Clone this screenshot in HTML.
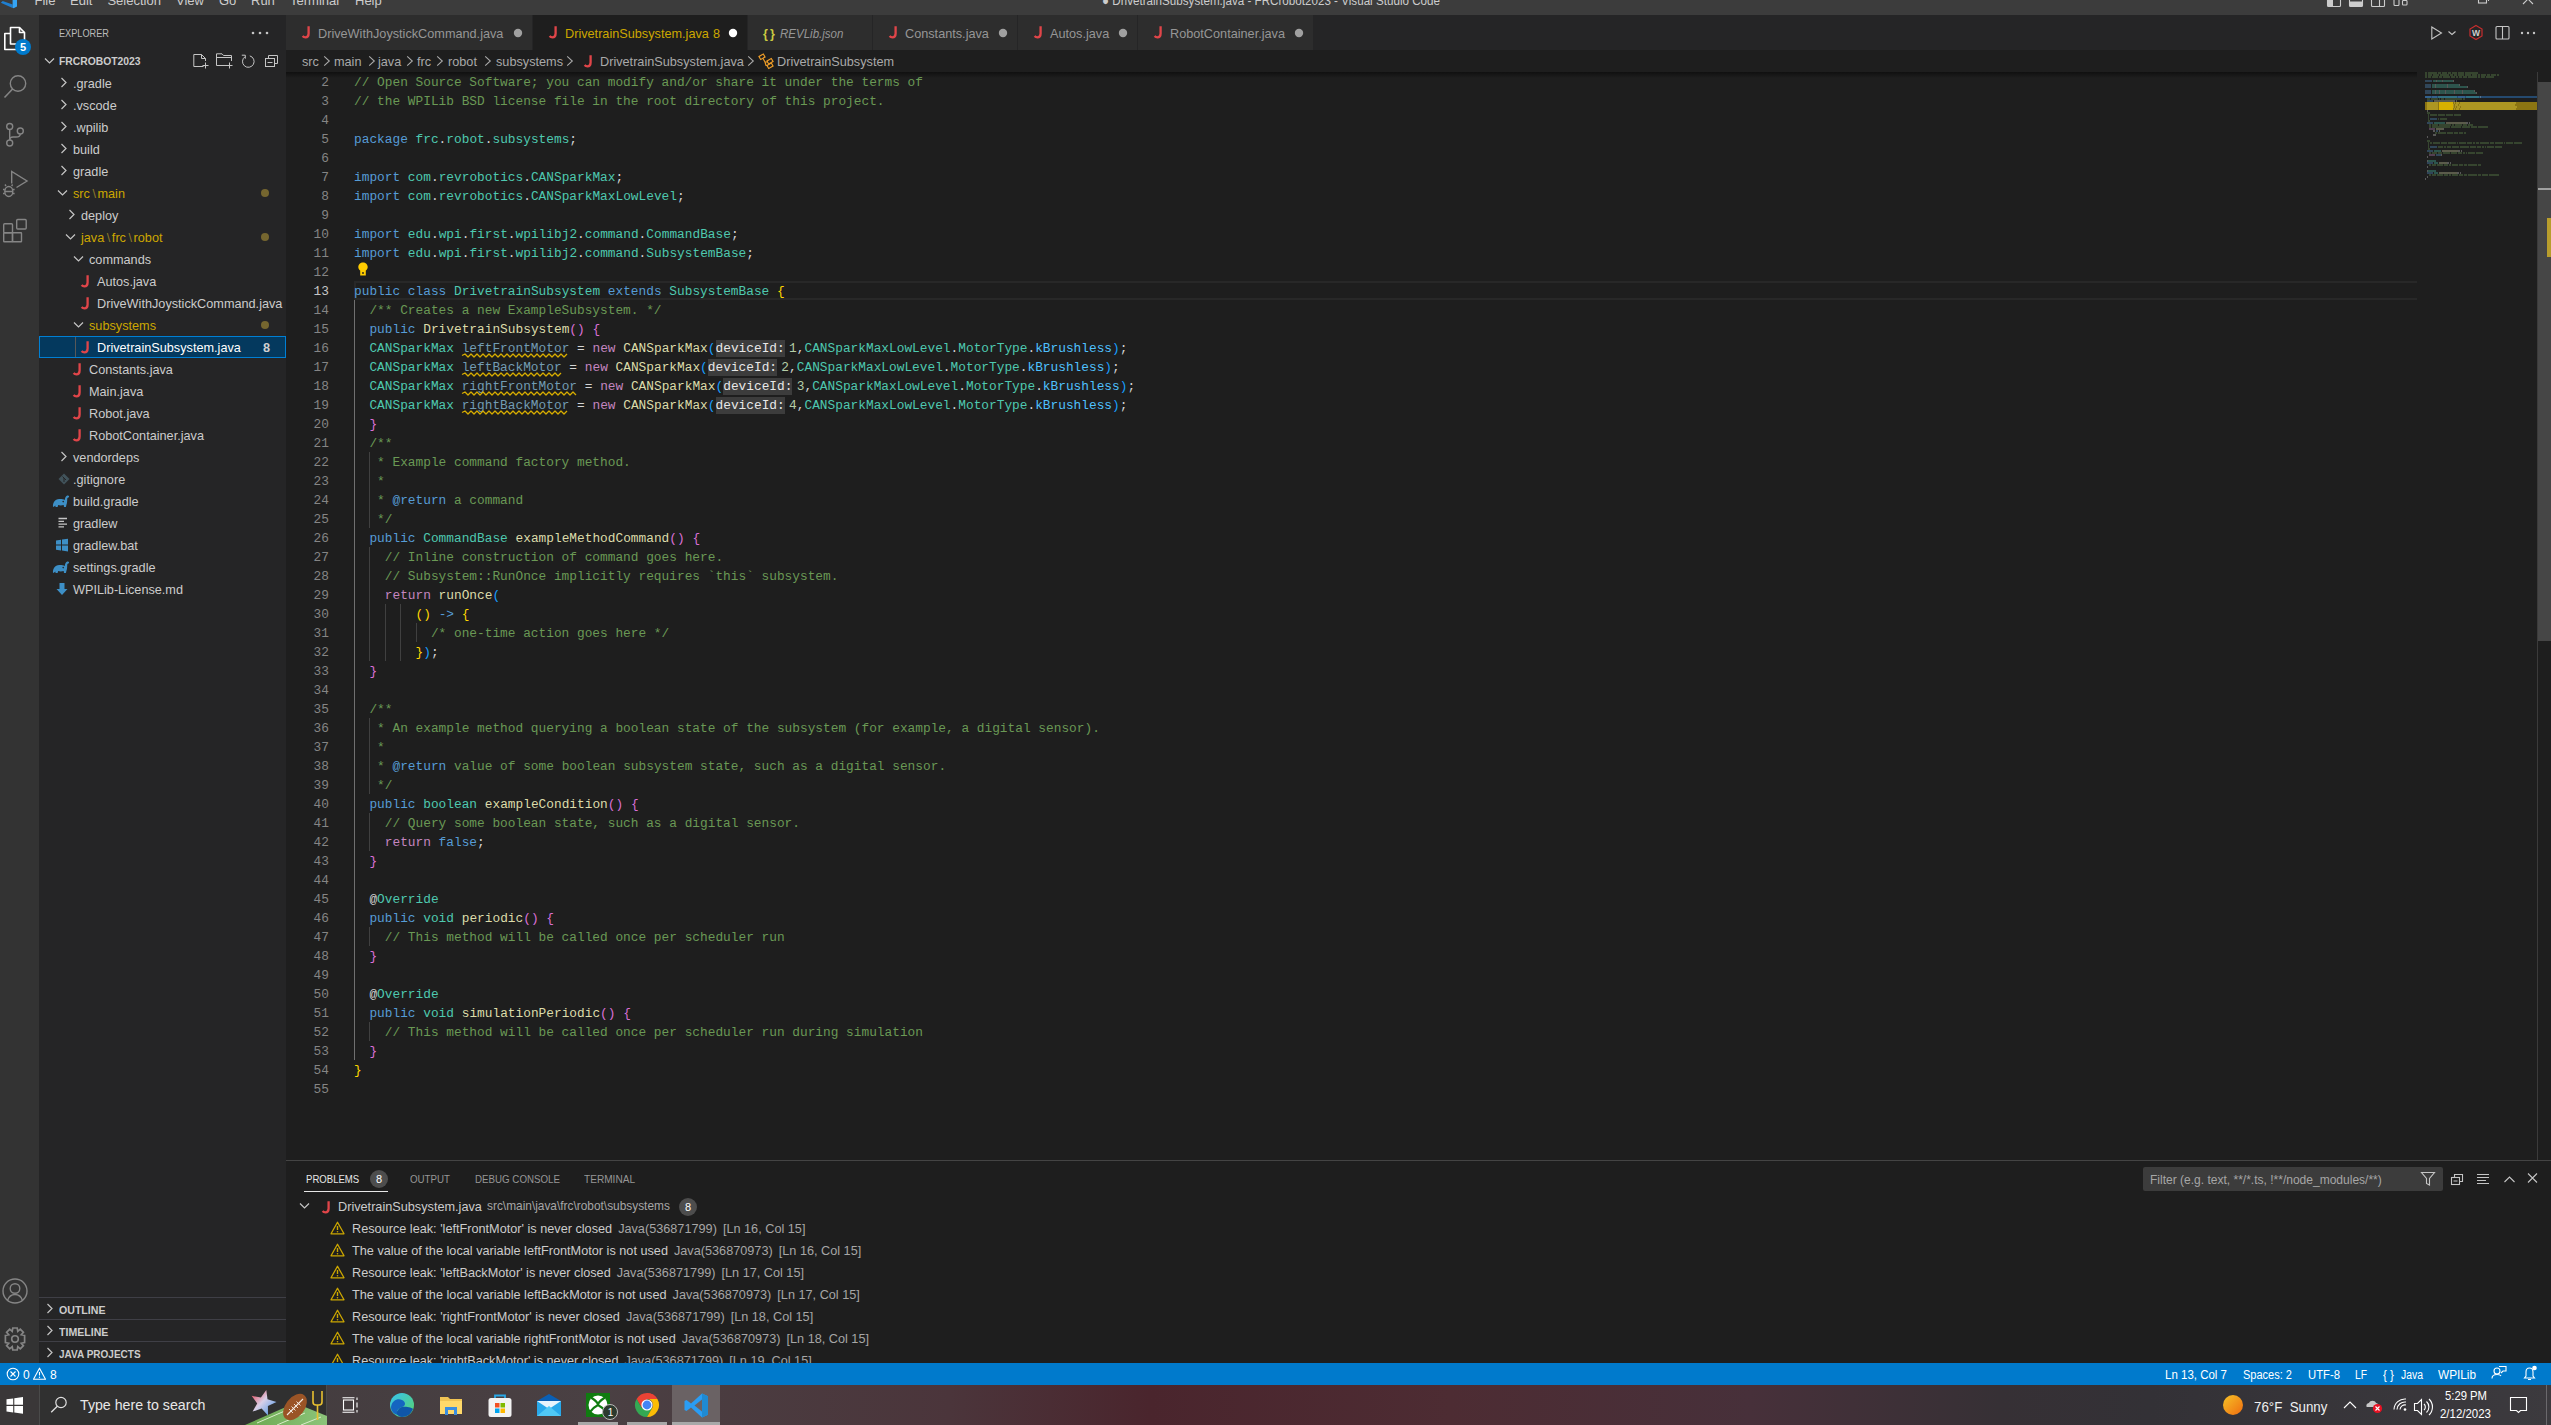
<!DOCTYPE html>
<html><head><meta charset="utf-8"><style>
html,body{margin:0;padding:0;}
body{width:2551px;height:1425px;overflow:hidden;position:relative;background:#1e1e1e;}
svg{position:absolute;overflow:visible}
</style></head><body>
<div style="position:absolute;left:0px;top:0px;width:2551px;height:15px;background:#3c3c3c;"></div>
<div style="position:absolute;left:0px;top:15px;width:39px;height:1348px;background:#333333;"></div>
<div style="position:absolute;left:39px;top:15px;width:247px;height:1348px;background:#252526;"></div>
<div style="position:absolute;left:286px;top:15px;width:2265px;height:35px;background:#252526;"></div>
<div style="position:absolute;left:286px;top:50px;width:2265px;height:22px;background:#1e1e1e;"></div>
<div style="position:absolute;left:286px;top:72px;width:2265px;height:1088px;background:#1e1e1e;"></div>
<div style="position:absolute;left:286px;top:1160px;width:2265px;height:203px;background:#1e1e1e;"></div>
<div style="position:absolute;left:286px;top:1160px;width:2265px;height:1px;background:#444444;"></div>
<div style="position:absolute;left:0px;top:1363px;width:2551px;height:22px;background:#007acc;"></div>
<div style="position:absolute;left:0px;top:1385px;width:2551px;height:40px;background:#3b3537;"></div>
<div style="position:absolute;left:34.5px;top:-6.00px;font:400 13px 'Liberation Sans', sans-serif;line-height:13px;color:#cccccc;white-space:pre;">File</div>
<div style="position:absolute;left:70px;top:-6.00px;font:400 13px 'Liberation Sans', sans-serif;line-height:13px;color:#cccccc;white-space:pre;">Edit</div>
<div style="position:absolute;left:107.4px;top:-6.00px;font:400 13px 'Liberation Sans', sans-serif;line-height:13px;color:#cccccc;white-space:pre;">Selection</div>
<div style="position:absolute;left:176px;top:-6.00px;font:400 13px 'Liberation Sans', sans-serif;line-height:13px;color:#cccccc;white-space:pre;">View</div>
<div style="position:absolute;left:219px;top:-6.00px;font:400 13px 'Liberation Sans', sans-serif;line-height:13px;color:#cccccc;white-space:pre;">Go</div>
<div style="position:absolute;left:251px;top:-6.00px;font:400 13px 'Liberation Sans', sans-serif;line-height:13px;color:#cccccc;white-space:pre;">Run</div>
<div style="position:absolute;left:290px;top:-6.00px;font:400 13px 'Liberation Sans', sans-serif;line-height:13px;color:#cccccc;white-space:pre;">Terminal</div>
<div style="position:absolute;left:355px;top:-6.00px;font:400 13px 'Liberation Sans', sans-serif;line-height:13px;color:#cccccc;white-space:pre;">Help</div>
<div style="position:absolute;left:1102px;top:-6.00px;font:400 13px 'Liberation Sans', sans-serif;line-height:13px;color:#cccccc;white-space:pre;transform:scaleX(0.8952);transform-origin:0 0;">● DrivetrainSubsystem.java - FRCrobot2023 - Visual Studio Code</div>
<svg style="left:0;top:0" width="20" height="15" viewBox="0 0 20 15"><path d="M0.8 2.7 L2.7 1.0 L12.6 4.4 V8.1 Z" fill="#1f7fd0"/><path d="M12.6 -2 H17 V6.4 L13.6 8.3 L12.6 7.8 Z" fill="#35a4f4"/></svg>
<svg style="left:0;top:0" width="40" height="1363" viewBox="0 0 40 1363">
<g fill="none" stroke="#ffffff" stroke-width="1.6" stroke-linejoin="round">
 <path d="M10.5 27.5 H19.5 L24.5 32.5 V44 H10.5 Z"/>
 <path d="M19.5 27.5 V32.5 H24.5"/>
 <path d="M10.5 33.5 H4.8 V49.5 H16"/>
</g>
<circle cx="23" cy="47" r="8" fill="#007acc"/>
<text x="23" y="51" font-family="Liberation Sans" font-size="11" font-weight="700" fill="#fff" text-anchor="middle">5</text>
<g fill="none" stroke="#858585" stroke-width="1.4">
 <circle cx="18" cy="83.5" r="7.7"/>
 <path d="M12.6 89 L4.5 97.5" stroke-width="1.6"/>
 <circle cx="9.7" cy="126.5" r="3"/>
 <circle cx="20.3" cy="131" r="3"/>
 <circle cx="9.7" cy="143" r="3"/>
 <path d="M9.7 129.5 V140"/>
 <path d="M20.3 134 C20.3 136.5 19 137 16 137 H13 C11 137 9.7 138 9.7 140"/>
 <path d="M11.7 183.5 V171.5 L27 181 L16.5 187.5"/>
 <ellipse cx="8.8" cy="191.5" rx="4" ry="5"/>
 <path d="M4.8 189.5 H3 M4.8 193.5 H3 M12.8 189.5 H14.6 M12.8 193.5 H14.6 M6 186 L5 184.5 M11.6 186 L12.6 184.5 M4.8 191.5 H12.8"/>
 <rect x="3.7" y="223.7" width="8.8" height="9" rx="1"/>
 <rect x="3.7" y="232.7" width="8.8" height="9" rx="0.5"/>
 <rect x="12.5" y="232.7" width="9" height="9" rx="0.5"/>
 <rect x="16.7" y="219.5" width="9.5" height="9.5" rx="1"/>
 <circle cx="15" cy="1291" r="12"/>
 <circle cx="15" cy="1288.5" r="4.8"/>
 <path d="M7.5 1300.5 C9 1296 12 1294.5 15 1294.5 C18 1294.5 21 1296 22.5 1300.5"/>
 <circle cx="15" cy="1339" r="3.3" stroke-width="1.6"/>
</g>
<path fill="none" stroke="#858585" stroke-width="1.7" stroke-linejoin="miter" d="M12.8 1328 H17.2 L17.8 1331.3 L20.3 1329.2 L23.4 1332.3 L21.3 1334.8 L24.6 1335.4 V1342.6 L21.3 1343.2 L23.4 1345.7 L20.3 1348.8 L17.8 1346.7 L17.2 1350 H12.8 L12.2 1346.7 L9.7 1348.8 L6.6 1345.7 L8.7 1343.2 L5.4 1342.6 V1335.4 L8.7 1334.8 L6.6 1332.3 L9.7 1329.2 L12.2 1331.3 Z"/>
</svg>
<div style="position:absolute;left:59px;top:27.69px;font:400 11px 'Liberation Sans', sans-serif;line-height:11px;color:#bbbbbb;white-space:pre;transform:scaleX(0.8346);transform-origin:0 0;">EXPLORER</div>
<svg style="left:250px;top:30px" width="22" height="6"><circle cx="3" cy="3" r="1.3" fill="#c5c5c5"/><circle cx="10" cy="3" r="1.3" fill="#c5c5c5"/><circle cx="17" cy="3" r="1.3" fill="#c5c5c5"/></svg>
<div style="position:absolute;left:59px;top:55.69px;font:700 11px 'Liberation Sans', sans-serif;line-height:11px;color:#cccccc;white-space:pre;transform:scaleX(0.9390);transform-origin:0 0;">FRCROBOT2023</div>
<svg style="left:44px;top:57px" width="12" height="8"><path d="M1 1.5 L5.5 6 L10 1.5" fill="none" stroke="#c5c5c5" stroke-width="1.2"/></svg>
<svg style="left:190px;top:50px" width="95" height="22" viewBox="190 50 95 22"><g fill="none" stroke="#c5c5c5" stroke-width="1">
<path d="M203.5 66.5 H193.8 V54.5 H201.5 L205.5 58.5 V61"/><path d="M201.5 54.5 V58.5 H205.5"/><path d="M205.5 62.5 V68.5 M202.5 65.5 H208.5"/>
<path d="M227.5 65.5 H216.5 V53.8 H222 L223.5 55.5 H231.5 V61"/><path d="M216.5 57.5 H231.5"/><path d="M229.5 62.5 V68.5 M226.5 65.5 H232.5"/>
<path d="M244.97 56.75 A5.8 5.8 0 1 0 249.8 55.9"/><path d="M241.8 55.2 H245.3 V58.7"/>
<rect x="265.5" y="58.5" width="9" height="8"/><path d="M268.5 58.5 V55.5 H277.5 V63.5 H274.5 M267.5 62.5 H272.5"/>
</g></svg>
<svg style="left:60px;top:77px" width="8" height="12"><path d="M1.5 1 L6 5.5 L1.5 10" fill="none" stroke="#c5c5c5" stroke-width="1.2"/></svg>
<div style="position:absolute;left:73px;top:78.25px;font:400 12.7px 'Liberation Sans', sans-serif;line-height:12.7px;color:#cccccc;white-space:pre;">.gradle</div>
<svg style="left:60px;top:99px" width="8" height="12"><path d="M1.5 1 L6 5.5 L1.5 10" fill="none" stroke="#c5c5c5" stroke-width="1.2"/></svg>
<div style="position:absolute;left:73px;top:100.25px;font:400 12.7px 'Liberation Sans', sans-serif;line-height:12.7px;color:#cccccc;white-space:pre;">.vscode</div>
<svg style="left:60px;top:121px" width="8" height="12"><path d="M1.5 1 L6 5.5 L1.5 10" fill="none" stroke="#c5c5c5" stroke-width="1.2"/></svg>
<div style="position:absolute;left:73px;top:122.25px;font:400 12.7px 'Liberation Sans', sans-serif;line-height:12.7px;color:#cccccc;white-space:pre;">.wpilib</div>
<svg style="left:60px;top:143px" width="8" height="12"><path d="M1.5 1 L6 5.5 L1.5 10" fill="none" stroke="#c5c5c5" stroke-width="1.2"/></svg>
<div style="position:absolute;left:73px;top:144.25px;font:400 12.7px 'Liberation Sans', sans-serif;line-height:12.7px;color:#cccccc;white-space:pre;">build</div>
<svg style="left:60px;top:165px" width="8" height="12"><path d="M1.5 1 L6 5.5 L1.5 10" fill="none" stroke="#c5c5c5" stroke-width="1.2"/></svg>
<div style="position:absolute;left:73px;top:166.25px;font:400 12.7px 'Liberation Sans', sans-serif;line-height:12.7px;color:#cccccc;white-space:pre;">gradle</div>
<svg style="left:57px;top:189px" width="12" height="8"><path d="M1 1.5 L5.5 6 L10 1.5" fill="none" stroke="#c5c5c5" stroke-width="1.2"/></svg>
<div style="position:absolute;left:73px;top:188.25px;font:400 12.7px 'Liberation Sans', sans-serif;line-height:12.7px;color:#cca700;white-space:pre;">src<span style="color:#8b7a2c;letter-spacing:-1px"> \ </span>main</div>
<svg style="left:260px;top:189px" width="10" height="10"><circle cx="5" cy="4" r="4" fill="#75662f"/></svg>
<svg style="left:68px;top:209px" width="8" height="12"><path d="M1.5 1 L6 5.5 L1.5 10" fill="none" stroke="#c5c5c5" stroke-width="1.2"/></svg>
<div style="position:absolute;left:81px;top:210.25px;font:400 12.7px 'Liberation Sans', sans-serif;line-height:12.7px;color:#cccccc;white-space:pre;">deploy</div>
<svg style="left:65px;top:233px" width="12" height="8"><path d="M1 1.5 L5.5 6 L10 1.5" fill="none" stroke="#c5c5c5" stroke-width="1.2"/></svg>
<div style="position:absolute;left:81px;top:232.25px;font:400 12.7px 'Liberation Sans', sans-serif;line-height:12.7px;color:#cca700;white-space:pre;">java<span style="color:#8b7a2c;letter-spacing:-1px"> \ </span>frc<span style="color:#8b7a2c;letter-spacing:-1px"> \ </span>robot</div>
<svg style="left:260px;top:233px" width="10" height="10"><circle cx="5" cy="4" r="4" fill="#75662f"/></svg>
<svg style="left:73px;top:255px" width="12" height="8"><path d="M1 1.5 L5.5 6 L10 1.5" fill="none" stroke="#c5c5c5" stroke-width="1.2"/></svg>
<div style="position:absolute;left:89px;top:254.25px;font:400 12.7px 'Liberation Sans', sans-serif;line-height:12.7px;color:#cccccc;white-space:pre;">commands</div>
<svg style="left:81px;top:275px" width="10" height="13" viewBox="0 0 10 13"><path d="M6.6 0.2 V7.6 C6.6 10.4 5.2 11.4 3.4 11.4 C2.2 11.4 1.2 10.8 0.6 10.1" fill="none" stroke="#e04549" stroke-width="2.3"/></svg>
<div style="position:absolute;left:97px;top:276.25px;font:400 12.7px 'Liberation Sans', sans-serif;line-height:12.7px;color:#cccccc;white-space:pre;">Autos.java</div>
<svg style="left:81px;top:297px" width="10" height="13" viewBox="0 0 10 13"><path d="M6.6 0.2 V7.6 C6.6 10.4 5.2 11.4 3.4 11.4 C2.2 11.4 1.2 10.8 0.6 10.1" fill="none" stroke="#e04549" stroke-width="2.3"/></svg>
<div style="position:absolute;left:97px;top:298.25px;font:400 12.7px 'Liberation Sans', sans-serif;line-height:12.7px;color:#cccccc;white-space:pre;">DriveWithJoystickCommand.java</div>
<svg style="left:73px;top:321px" width="12" height="8"><path d="M1 1.5 L5.5 6 L10 1.5" fill="none" stroke="#c5c5c5" stroke-width="1.2"/></svg>
<div style="position:absolute;left:89px;top:320.25px;font:400 12.7px 'Liberation Sans', sans-serif;line-height:12.7px;color:#cca700;white-space:pre;">subsystems</div>
<svg style="left:260px;top:321px" width="10" height="10"><circle cx="5" cy="4" r="4" fill="#75662f"/></svg>
<div style="position:absolute;left:39px;top:336px;width:247px;height:22px;background:#04395e;box-sizing:border-box;border:1px solid #007fd4;"></div>
<div style="position:absolute;left:75px;top:337px;width:1px;height:20px;background:#585858;"></div>
<svg style="left:81px;top:341px" width="10" height="13" viewBox="0 0 10 13"><path d="M6.6 0.2 V7.6 C6.6 10.4 5.2 11.4 3.4 11.4 C2.2 11.4 1.2 10.8 0.6 10.1" fill="none" stroke="#e04549" stroke-width="2.3"/></svg>
<div style="position:absolute;left:97px;top:342.25px;font:400 12.7px 'Liberation Sans', sans-serif;line-height:12.7px;color:#ffffff;white-space:pre;">DrivetrainSubsystem.java</div>
<div style="position:absolute;left:263px;top:342.25px;font:700 12.7px 'Liberation Sans', sans-serif;line-height:12.7px;color:#d0d0d0;white-space:pre;">8</div>
<svg style="left:73px;top:363px" width="10" height="13" viewBox="0 0 10 13"><path d="M6.6 0.2 V7.6 C6.6 10.4 5.2 11.4 3.4 11.4 C2.2 11.4 1.2 10.8 0.6 10.1" fill="none" stroke="#e04549" stroke-width="2.3"/></svg>
<div style="position:absolute;left:89px;top:364.25px;font:400 12.7px 'Liberation Sans', sans-serif;line-height:12.7px;color:#cccccc;white-space:pre;">Constants.java</div>
<svg style="left:73px;top:385px" width="10" height="13" viewBox="0 0 10 13"><path d="M6.6 0.2 V7.6 C6.6 10.4 5.2 11.4 3.4 11.4 C2.2 11.4 1.2 10.8 0.6 10.1" fill="none" stroke="#e04549" stroke-width="2.3"/></svg>
<div style="position:absolute;left:89px;top:386.25px;font:400 12.7px 'Liberation Sans', sans-serif;line-height:12.7px;color:#cccccc;white-space:pre;">Main.java</div>
<svg style="left:73px;top:407px" width="10" height="13" viewBox="0 0 10 13"><path d="M6.6 0.2 V7.6 C6.6 10.4 5.2 11.4 3.4 11.4 C2.2 11.4 1.2 10.8 0.6 10.1" fill="none" stroke="#e04549" stroke-width="2.3"/></svg>
<div style="position:absolute;left:89px;top:408.25px;font:400 12.7px 'Liberation Sans', sans-serif;line-height:12.7px;color:#cccccc;white-space:pre;">Robot.java</div>
<svg style="left:73px;top:429px" width="10" height="13" viewBox="0 0 10 13"><path d="M6.6 0.2 V7.6 C6.6 10.4 5.2 11.4 3.4 11.4 C2.2 11.4 1.2 10.8 0.6 10.1" fill="none" stroke="#e04549" stroke-width="2.3"/></svg>
<div style="position:absolute;left:89px;top:430.25px;font:400 12.7px 'Liberation Sans', sans-serif;line-height:12.7px;color:#cccccc;white-space:pre;">RobotContainer.java</div>
<svg style="left:60px;top:451px" width="8" height="12"><path d="M1.5 1 L6 5.5 L1.5 10" fill="none" stroke="#c5c5c5" stroke-width="1.2"/></svg>
<div style="position:absolute;left:73px;top:452.25px;font:400 12.7px 'Liberation Sans', sans-serif;line-height:12.7px;color:#cccccc;white-space:pre;">vendordeps</div>
<svg style="left:57px;top:472px" width="14" height="14" viewBox="0 0 14 14"><path d="M7 1.5 L12.5 7 L7 12.5 L1.5 7 Z" fill="#41535b"/><path d="M5.5 4.5 L9 8 M7 6 V10" stroke="#252526" stroke-width="1"/></svg>
<div style="position:absolute;left:73px;top:474.25px;font:400 12.7px 'Liberation Sans', sans-serif;line-height:12.7px;color:#cccccc;white-space:pre;">.gitignore</div>
<svg style="left:52px;top:494px" width="18" height="14" viewBox="0 0 18 14"><path d="M1 13 C0.6 9 2.8 5.2 7.2 5 C9.6 4.9 11.6 5.4 12.8 5.9 C13 4 13.6 2.2 15.2 1.6 C16.6 1.1 17.6 2.2 16.8 3.2 C16.2 3.9 15.4 3.6 15.3 4.6 C15.1 6.4 15.3 9 14.5 10.6 L13.9 13 H12 L11.7 11 C10 11.6 7.8 11.7 6.2 11.1 L5.6 13 H3.6 L3.3 11.4 C2.6 12.2 1.8 12.8 1 13 Z" fill="#3d8fc6"/><circle cx="11.2" cy="7.6" r="0.8" fill="#252526"/></svg>
<div style="position:absolute;left:73px;top:496.25px;font:400 12.7px 'Liberation Sans', sans-serif;line-height:12.7px;color:#cccccc;white-space:pre;">build.gradle</div>
<svg style="left:57px;top:517px" width="12" height="12" viewBox="0 0 12 12"><path d="M1.5 1.5 H10 M1.5 4.3 H7 M1.5 7.1 H10 M1.5 9.9 H7" stroke="#c5c5c5" stroke-width="1.3"/></svg>
<div style="position:absolute;left:73px;top:518.25px;font:400 12.7px 'Liberation Sans', sans-serif;line-height:12.7px;color:#cccccc;white-space:pre;">gradlew</div>
<svg style="left:55px;top:538px" width="14" height="14" viewBox="0 0 14 14"><path d="M1 2.5 L6 1.8 V6.6 H1 Z M7 1.6 L13 0.8 V6.6 H7 Z M1 7.6 H6 V12.4 L1 11.7 Z M7 7.6 H13 V13.4 L7 12.6 Z" fill="#3d8fc6"/></svg>
<div style="position:absolute;left:73px;top:540.25px;font:400 12.7px 'Liberation Sans', sans-serif;line-height:12.7px;color:#cccccc;white-space:pre;">gradlew.bat</div>
<svg style="left:52px;top:560px" width="18" height="14" viewBox="0 0 18 14"><path d="M1 13 C0.6 9 2.8 5.2 7.2 5 C9.6 4.9 11.6 5.4 12.8 5.9 C13 4 13.6 2.2 15.2 1.6 C16.6 1.1 17.6 2.2 16.8 3.2 C16.2 3.9 15.4 3.6 15.3 4.6 C15.1 6.4 15.3 9 14.5 10.6 L13.9 13 H12 L11.7 11 C10 11.6 7.8 11.7 6.2 11.1 L5.6 13 H3.6 L3.3 11.4 C2.6 12.2 1.8 12.8 1 13 Z" fill="#3d8fc6"/><circle cx="11.2" cy="7.6" r="0.8" fill="#252526"/></svg>
<div style="position:absolute;left:73px;top:562.25px;font:400 12.7px 'Liberation Sans', sans-serif;line-height:12.7px;color:#cccccc;white-space:pre;">settings.gradle</div>
<svg style="left:56px;top:582px" width="12" height="14" viewBox="0 0 12 14"><path d="M3.5 1 H8.5 V7 H11.5 L6 13 L0.5 7 H3.5 Z" fill="#3d8fc6"/></svg>
<div style="position:absolute;left:73px;top:584.25px;font:400 12.7px 'Liberation Sans', sans-serif;line-height:12.7px;color:#cccccc;white-space:pre;">WPILib-License.md</div>
<div style="position:absolute;left:39px;top:1297px;width:247px;height:1px;background:#3f3f46;"></div>
<svg style="left:46px;top:1303px" width="8" height="12"><path d="M1.5 1 L6 5.5 L1.5 10" fill="none" stroke="#c5c5c5" stroke-width="1.2"/></svg>
<div style="position:absolute;left:59px;top:1304.69px;font:700 11px 'Liberation Sans', sans-serif;line-height:11px;color:#cccccc;white-space:pre;transform:scaleX(0.9632);transform-origin:0 0;">OUTLINE</div>
<div style="position:absolute;left:39px;top:1319px;width:247px;height:1px;background:#3f3f46;"></div>
<svg style="left:46px;top:1325px" width="8" height="12"><path d="M1.5 1 L6 5.5 L1.5 10" fill="none" stroke="#c5c5c5" stroke-width="1.2"/></svg>
<div style="position:absolute;left:59px;top:1326.69px;font:700 11px 'Liberation Sans', sans-serif;line-height:11px;color:#cccccc;white-space:pre;transform:scaleX(0.9623);transform-origin:0 0;">TIMELINE</div>
<div style="position:absolute;left:39px;top:1341px;width:247px;height:1px;background:#3f3f46;"></div>
<svg style="left:46px;top:1347px" width="8" height="12"><path d="M1.5 1 L6 5.5 L1.5 10" fill="none" stroke="#c5c5c5" stroke-width="1.2"/></svg>
<div style="position:absolute;left:59px;top:1348.69px;font:700 11px 'Liberation Sans', sans-serif;line-height:11px;color:#cccccc;white-space:pre;transform:scaleX(0.9102);transform-origin:0 0;">JAVA PROJECTS</div>
<div style="position:absolute;left:286px;top:15px;width:246px;height:35px;background:#2d2d2d;"></div>
<svg style="left:301.5px;top:26px" width="10" height="13" viewBox="0 0 10 13"><path d="M6.6 0.2 V7.6 C6.6 10.4 5.2 11.4 3.4 11.4 C2.2 11.4 1.2 10.8 0.6 10.1" fill="none" stroke="#e04549" stroke-width="2.3"/></svg>
<div style="position:absolute;left:318px;top:28.25px;font:400 12.7px 'Liberation Sans', sans-serif;line-height:12.7px;color:#969696;white-space:pre;">DriveWithJoystickCommand.java</div>
<svg style="left:513px;top:28px" width="10" height="10"><circle cx="5" cy="5" r="4.2" fill="#a0a0a0"/></svg>
<div style="position:absolute;left:533px;top:15px;width:214px;height:35px;background:#1e1e1e;"></div>
<svg style="left:548.5px;top:26px" width="10" height="13" viewBox="0 0 10 13"><path d="M6.6 0.2 V7.6 C6.6 10.4 5.2 11.4 3.4 11.4 C2.2 11.4 1.2 10.8 0.6 10.1" fill="none" stroke="#e04549" stroke-width="2.3"/></svg>
<div style="position:absolute;left:565px;top:28.25px;font:400 12.7px 'Liberation Sans', sans-serif;line-height:12.7px;color:#cca700;white-space:pre;">DrivetrainSubsystem.java</div>
<div style="position:absolute;left:713px;top:28.25px;font:400 12.7px 'Liberation Sans', sans-serif;line-height:12.7px;color:#cca700;white-space:pre;">8</div>
<svg style="left:728px;top:28px" width="10" height="10"><circle cx="5" cy="5" r="4.2" fill="#ffffff"/></svg>
<div style="position:absolute;left:748px;top:15px;width:124px;height:35px;background:#2d2d2d;"></div>
<div style="position:absolute;left:763px;top:27.92px;font:700 12.5px 'Liberation Sans', sans-serif;line-height:12.5px;color:#cbcb41;white-space:pre;">{</div>
<div style="position:absolute;left:770px;top:27.92px;font:700 12.5px 'Liberation Sans', sans-serif;line-height:12.5px;color:#cbcb41;white-space:pre;">}</div>
<div style="position:absolute;left:780px;top:28.25px;font:italic 400 12.7px 'Liberation Sans', sans-serif;line-height:12.7px;color:#969696;white-space:pre;transform:scaleX(0.9086);transform-origin:0 0">REVLib.json</div>
<div style="position:absolute;left:873px;top:15px;width:144px;height:35px;background:#2d2d2d;"></div>
<svg style="left:888.5px;top:26px" width="10" height="13" viewBox="0 0 10 13"><path d="M6.6 0.2 V7.6 C6.6 10.4 5.2 11.4 3.4 11.4 C2.2 11.4 1.2 10.8 0.6 10.1" fill="none" stroke="#e04549" stroke-width="2.3"/></svg>
<div style="position:absolute;left:905px;top:28.25px;font:400 12.7px 'Liberation Sans', sans-serif;line-height:12.7px;color:#969696;white-space:pre;">Constants.java</div>
<svg style="left:998px;top:28px" width="10" height="10"><circle cx="5" cy="5" r="4.2" fill="#a0a0a0"/></svg>
<div style="position:absolute;left:1018px;top:15px;width:119px;height:35px;background:#2d2d2d;"></div>
<svg style="left:1033.5px;top:26px" width="10" height="13" viewBox="0 0 10 13"><path d="M6.6 0.2 V7.6 C6.6 10.4 5.2 11.4 3.4 11.4 C2.2 11.4 1.2 10.8 0.6 10.1" fill="none" stroke="#e04549" stroke-width="2.3"/></svg>
<div style="position:absolute;left:1050px;top:28.25px;font:400 12.7px 'Liberation Sans', sans-serif;line-height:12.7px;color:#969696;white-space:pre;">Autos.java</div>
<svg style="left:1118px;top:28px" width="10" height="10"><circle cx="5" cy="5" r="4.2" fill="#a0a0a0"/></svg>
<div style="position:absolute;left:1138px;top:15px;width:175px;height:35px;background:#2d2d2d;"></div>
<svg style="left:1153.5px;top:26px" width="10" height="13" viewBox="0 0 10 13"><path d="M6.6 0.2 V7.6 C6.6 10.4 5.2 11.4 3.4 11.4 C2.2 11.4 1.2 10.8 0.6 10.1" fill="none" stroke="#e04549" stroke-width="2.3"/></svg>
<div style="position:absolute;left:1170px;top:28.25px;font:400 12.7px 'Liberation Sans', sans-serif;line-height:12.7px;color:#969696;white-space:pre;">RobotContainer.java</div>
<svg style="left:1294px;top:28px" width="10" height="10"><circle cx="5" cy="5" r="4.2" fill="#a0a0a0"/></svg>
<svg style="left:2420px;top:20px" width="131" height="26" viewBox="2420 20 131 26"><g fill="none" stroke="#c5c5c5" stroke-width="1.1">
<path d="M2431.8 27 L2441.5 33 L2431.8 39 Z"/>
<path d="M2448.5 31.5 L2452 34.5 L2455.5 31.5"/>
<rect x="2496" y="26.5" width="13" height="12.5" rx="1"/><path d="M2502.5 26.5 V39"/>
</g>
<path d="M2476 25.5 L2482 29 V36 L2476 39.5 L2470 36 V29 Z" fill="none" stroke="#c72e2e" stroke-width="1.2"/>
<text x="2476" y="36.2" font-family="Liberation Sans" font-size="8.5" font-weight="700" fill="#d0d0d0" text-anchor="middle">W</text>
<circle cx="2522" cy="33" r="1.2" fill="#c5c5c5"/><circle cx="2528" cy="33" r="1.2" fill="#c5c5c5"/><circle cx="2534" cy="33" r="1.2" fill="#c5c5c5"/>
</svg>
<div style="position:absolute;left:302px;top:55.55px;font:400 12.7px 'Liberation Sans', sans-serif;line-height:12.7px;color:#a9a9a9;white-space:pre;">src</div>
<div style="position:absolute;left:334px;top:55.55px;font:400 12.7px 'Liberation Sans', sans-serif;line-height:12.7px;color:#a9a9a9;white-space:pre;">main</div>
<div style="position:absolute;left:378px;top:55.55px;font:400 12.7px 'Liberation Sans', sans-serif;line-height:12.7px;color:#a9a9a9;white-space:pre;">java</div>
<div style="position:absolute;left:417px;top:55.55px;font:400 12.7px 'Liberation Sans', sans-serif;line-height:12.7px;color:#a9a9a9;white-space:pre;">frc</div>
<div style="position:absolute;left:448px;top:55.55px;font:400 12.7px 'Liberation Sans', sans-serif;line-height:12.7px;color:#a9a9a9;white-space:pre;">robot</div>
<div style="position:absolute;left:496px;top:55.55px;font:400 12.7px 'Liberation Sans', sans-serif;line-height:12.7px;color:#a9a9a9;white-space:pre;">subsystems</div>
<svg style="left:322.7px;top:55px" width="9" height="13"><path d="M1.2 1.3 L6.3 6 L1.2 10.7" fill="none" stroke="#a9a9a9" stroke-width="1.1"/></svg>
<svg style="left:367.6px;top:55px" width="9" height="13"><path d="M1.2 1.3 L6.3 6 L1.2 10.7" fill="none" stroke="#a9a9a9" stroke-width="1.1"/></svg>
<svg style="left:405.8px;top:55px" width="9" height="13"><path d="M1.2 1.3 L6.3 6 L1.2 10.7" fill="none" stroke="#a9a9a9" stroke-width="1.1"/></svg>
<svg style="left:436.3px;top:55px" width="9" height="13"><path d="M1.2 1.3 L6.3 6 L1.2 10.7" fill="none" stroke="#a9a9a9" stroke-width="1.1"/></svg>
<svg style="left:484.1px;top:55px" width="9" height="13"><path d="M1.2 1.3 L6.3 6 L1.2 10.7" fill="none" stroke="#a9a9a9" stroke-width="1.1"/></svg>
<svg style="left:566.3px;top:55px" width="9" height="13"><path d="M1.2 1.3 L6.3 6 L1.2 10.7" fill="none" stroke="#a9a9a9" stroke-width="1.1"/></svg>
<svg style="left:747.3px;top:55px" width="9" height="13"><path d="M1.2 1.3 L6.3 6 L1.2 10.7" fill="none" stroke="#a9a9a9" stroke-width="1.1"/></svg>
<svg style="left:584px;top:55px" width="10" height="13" viewBox="0 0 10 13"><path d="M6.6 0.2 V7.6 C6.6 10.4 5.2 11.4 3.4 11.4 C2.2 11.4 1.2 10.8 0.6 10.1" fill="none" stroke="#e04549" stroke-width="2.3"/></svg>
<div style="position:absolute;left:600px;top:55.55px;font:400 12.7px 'Liberation Sans', sans-serif;line-height:12.7px;color:#a9a9a9;white-space:pre;">DrivetrainSubsystem.java</div>
<svg style="left:758px;top:53px" width="18" height="16" viewBox="0 0 18 16"><g fill="none" stroke="#ee9d28" stroke-width="1.2"><rect x="1.5" y="2" width="5" height="3.5" transform="rotate(-30 4 3.75)"/><rect x="9.5" y="6.5" width="5" height="3.5" transform="rotate(-30 12 8.25)"/><rect x="9.5" y="11" width="5" height="3.5" transform="rotate(-30 12 12.75)"/><path d="M5 5.5 L7 9 H9.5 M7 9 L8 12.5 H9.5"/></g></svg>
<div style="position:absolute;left:777px;top:55.55px;font:400 12.7px 'Liberation Sans', sans-serif;line-height:12.7px;color:#a9a9a9;white-space:pre;">DrivetrainSubsystem</div>
<div style="position:absolute;left:286px;top:72px;width:2131px;height:6px;background:linear-gradient(rgba(0,0,0,0.47),rgba(0,0,0,0))"></div>
<div style="position:absolute;left:354px;top:281px;width:2063px;height:19px;background:transparent;box-sizing:border-box;border:2px solid #282828;border-right:none;"></div>
<div style="position:absolute;left:354px;top:300px;width:1px;height:760px;background:#707070;"></div>
<div style="position:absolute;left:369px;top:452px;width:1px;height:76px;background:#404040;"></div>
<div style="position:absolute;left:369px;top:547px;width:1px;height:114px;background:#404040;"></div>
<div style="position:absolute;left:385px;top:604px;width:1px;height:57px;background:#404040;"></div>
<div style="position:absolute;left:400px;top:604px;width:1px;height:57px;background:#404040;"></div>
<div style="position:absolute;left:416px;top:623px;width:1px;height:19px;background:#404040;"></div>
<div style="position:absolute;left:369px;top:718px;width:1px;height:76px;background:#404040;"></div>
<div style="position:absolute;left:369px;top:813px;width:1px;height:38px;background:#404040;"></div>
<div style="position:absolute;left:369px;top:927px;width:1px;height:19px;background:#404040;"></div>
<div style="position:absolute;left:369px;top:1022px;width:1px;height:19px;background:#404040;"></div>
<div style="position:absolute;left:281px;width:48px;top:73px;height:19px;font:12.825px 'Liberation Mono', monospace;line-height:19px;color:#858585;text-align:right;white-space:pre">2</div>
<div style="position:absolute;left:281px;width:48px;top:92px;height:19px;font:12.825px 'Liberation Mono', monospace;line-height:19px;color:#858585;text-align:right;white-space:pre">3</div>
<div style="position:absolute;left:281px;width:48px;top:111px;height:19px;font:12.825px 'Liberation Mono', monospace;line-height:19px;color:#858585;text-align:right;white-space:pre">4</div>
<div style="position:absolute;left:281px;width:48px;top:130px;height:19px;font:12.825px 'Liberation Mono', monospace;line-height:19px;color:#858585;text-align:right;white-space:pre">5</div>
<div style="position:absolute;left:281px;width:48px;top:149px;height:19px;font:12.825px 'Liberation Mono', monospace;line-height:19px;color:#858585;text-align:right;white-space:pre">6</div>
<div style="position:absolute;left:281px;width:48px;top:168px;height:19px;font:12.825px 'Liberation Mono', monospace;line-height:19px;color:#858585;text-align:right;white-space:pre">7</div>
<div style="position:absolute;left:281px;width:48px;top:187px;height:19px;font:12.825px 'Liberation Mono', monospace;line-height:19px;color:#858585;text-align:right;white-space:pre">8</div>
<div style="position:absolute;left:281px;width:48px;top:206px;height:19px;font:12.825px 'Liberation Mono', monospace;line-height:19px;color:#858585;text-align:right;white-space:pre">9</div>
<div style="position:absolute;left:281px;width:48px;top:225px;height:19px;font:12.825px 'Liberation Mono', monospace;line-height:19px;color:#858585;text-align:right;white-space:pre">10</div>
<div style="position:absolute;left:281px;width:48px;top:244px;height:19px;font:12.825px 'Liberation Mono', monospace;line-height:19px;color:#858585;text-align:right;white-space:pre">11</div>
<div style="position:absolute;left:281px;width:48px;top:263px;height:19px;font:12.825px 'Liberation Mono', monospace;line-height:19px;color:#858585;text-align:right;white-space:pre">12</div>
<div style="position:absolute;left:281px;width:48px;top:282px;height:19px;font:12.825px 'Liberation Mono', monospace;line-height:19px;color:#c6c6c6;text-align:right;white-space:pre">13</div>
<div style="position:absolute;left:281px;width:48px;top:301px;height:19px;font:12.825px 'Liberation Mono', monospace;line-height:19px;color:#858585;text-align:right;white-space:pre">14</div>
<div style="position:absolute;left:281px;width:48px;top:320px;height:19px;font:12.825px 'Liberation Mono', monospace;line-height:19px;color:#858585;text-align:right;white-space:pre">15</div>
<div style="position:absolute;left:281px;width:48px;top:339px;height:19px;font:12.825px 'Liberation Mono', monospace;line-height:19px;color:#858585;text-align:right;white-space:pre">16</div>
<div style="position:absolute;left:281px;width:48px;top:358px;height:19px;font:12.825px 'Liberation Mono', monospace;line-height:19px;color:#858585;text-align:right;white-space:pre">17</div>
<div style="position:absolute;left:281px;width:48px;top:377px;height:19px;font:12.825px 'Liberation Mono', monospace;line-height:19px;color:#858585;text-align:right;white-space:pre">18</div>
<div style="position:absolute;left:281px;width:48px;top:396px;height:19px;font:12.825px 'Liberation Mono', monospace;line-height:19px;color:#858585;text-align:right;white-space:pre">19</div>
<div style="position:absolute;left:281px;width:48px;top:415px;height:19px;font:12.825px 'Liberation Mono', monospace;line-height:19px;color:#858585;text-align:right;white-space:pre">20</div>
<div style="position:absolute;left:281px;width:48px;top:434px;height:19px;font:12.825px 'Liberation Mono', monospace;line-height:19px;color:#858585;text-align:right;white-space:pre">21</div>
<div style="position:absolute;left:281px;width:48px;top:453px;height:19px;font:12.825px 'Liberation Mono', monospace;line-height:19px;color:#858585;text-align:right;white-space:pre">22</div>
<div style="position:absolute;left:281px;width:48px;top:472px;height:19px;font:12.825px 'Liberation Mono', monospace;line-height:19px;color:#858585;text-align:right;white-space:pre">23</div>
<div style="position:absolute;left:281px;width:48px;top:491px;height:19px;font:12.825px 'Liberation Mono', monospace;line-height:19px;color:#858585;text-align:right;white-space:pre">24</div>
<div style="position:absolute;left:281px;width:48px;top:510px;height:19px;font:12.825px 'Liberation Mono', monospace;line-height:19px;color:#858585;text-align:right;white-space:pre">25</div>
<div style="position:absolute;left:281px;width:48px;top:529px;height:19px;font:12.825px 'Liberation Mono', monospace;line-height:19px;color:#858585;text-align:right;white-space:pre">26</div>
<div style="position:absolute;left:281px;width:48px;top:548px;height:19px;font:12.825px 'Liberation Mono', monospace;line-height:19px;color:#858585;text-align:right;white-space:pre">27</div>
<div style="position:absolute;left:281px;width:48px;top:567px;height:19px;font:12.825px 'Liberation Mono', monospace;line-height:19px;color:#858585;text-align:right;white-space:pre">28</div>
<div style="position:absolute;left:281px;width:48px;top:586px;height:19px;font:12.825px 'Liberation Mono', monospace;line-height:19px;color:#858585;text-align:right;white-space:pre">29</div>
<div style="position:absolute;left:281px;width:48px;top:605px;height:19px;font:12.825px 'Liberation Mono', monospace;line-height:19px;color:#858585;text-align:right;white-space:pre">30</div>
<div style="position:absolute;left:281px;width:48px;top:624px;height:19px;font:12.825px 'Liberation Mono', monospace;line-height:19px;color:#858585;text-align:right;white-space:pre">31</div>
<div style="position:absolute;left:281px;width:48px;top:643px;height:19px;font:12.825px 'Liberation Mono', monospace;line-height:19px;color:#858585;text-align:right;white-space:pre">32</div>
<div style="position:absolute;left:281px;width:48px;top:662px;height:19px;font:12.825px 'Liberation Mono', monospace;line-height:19px;color:#858585;text-align:right;white-space:pre">33</div>
<div style="position:absolute;left:281px;width:48px;top:681px;height:19px;font:12.825px 'Liberation Mono', monospace;line-height:19px;color:#858585;text-align:right;white-space:pre">34</div>
<div style="position:absolute;left:281px;width:48px;top:700px;height:19px;font:12.825px 'Liberation Mono', monospace;line-height:19px;color:#858585;text-align:right;white-space:pre">35</div>
<div style="position:absolute;left:281px;width:48px;top:719px;height:19px;font:12.825px 'Liberation Mono', monospace;line-height:19px;color:#858585;text-align:right;white-space:pre">36</div>
<div style="position:absolute;left:281px;width:48px;top:738px;height:19px;font:12.825px 'Liberation Mono', monospace;line-height:19px;color:#858585;text-align:right;white-space:pre">37</div>
<div style="position:absolute;left:281px;width:48px;top:757px;height:19px;font:12.825px 'Liberation Mono', monospace;line-height:19px;color:#858585;text-align:right;white-space:pre">38</div>
<div style="position:absolute;left:281px;width:48px;top:776px;height:19px;font:12.825px 'Liberation Mono', monospace;line-height:19px;color:#858585;text-align:right;white-space:pre">39</div>
<div style="position:absolute;left:281px;width:48px;top:795px;height:19px;font:12.825px 'Liberation Mono', monospace;line-height:19px;color:#858585;text-align:right;white-space:pre">40</div>
<div style="position:absolute;left:281px;width:48px;top:814px;height:19px;font:12.825px 'Liberation Mono', monospace;line-height:19px;color:#858585;text-align:right;white-space:pre">41</div>
<div style="position:absolute;left:281px;width:48px;top:833px;height:19px;font:12.825px 'Liberation Mono', monospace;line-height:19px;color:#858585;text-align:right;white-space:pre">42</div>
<div style="position:absolute;left:281px;width:48px;top:852px;height:19px;font:12.825px 'Liberation Mono', monospace;line-height:19px;color:#858585;text-align:right;white-space:pre">43</div>
<div style="position:absolute;left:281px;width:48px;top:871px;height:19px;font:12.825px 'Liberation Mono', monospace;line-height:19px;color:#858585;text-align:right;white-space:pre">44</div>
<div style="position:absolute;left:281px;width:48px;top:890px;height:19px;font:12.825px 'Liberation Mono', monospace;line-height:19px;color:#858585;text-align:right;white-space:pre">45</div>
<div style="position:absolute;left:281px;width:48px;top:909px;height:19px;font:12.825px 'Liberation Mono', monospace;line-height:19px;color:#858585;text-align:right;white-space:pre">46</div>
<div style="position:absolute;left:281px;width:48px;top:928px;height:19px;font:12.825px 'Liberation Mono', monospace;line-height:19px;color:#858585;text-align:right;white-space:pre">47</div>
<div style="position:absolute;left:281px;width:48px;top:947px;height:19px;font:12.825px 'Liberation Mono', monospace;line-height:19px;color:#858585;text-align:right;white-space:pre">48</div>
<div style="position:absolute;left:281px;width:48px;top:966px;height:19px;font:12.825px 'Liberation Mono', monospace;line-height:19px;color:#858585;text-align:right;white-space:pre">49</div>
<div style="position:absolute;left:281px;width:48px;top:985px;height:19px;font:12.825px 'Liberation Mono', monospace;line-height:19px;color:#858585;text-align:right;white-space:pre">50</div>
<div style="position:absolute;left:281px;width:48px;top:1004px;height:19px;font:12.825px 'Liberation Mono', monospace;line-height:19px;color:#858585;text-align:right;white-space:pre">51</div>
<div style="position:absolute;left:281px;width:48px;top:1023px;height:19px;font:12.825px 'Liberation Mono', monospace;line-height:19px;color:#858585;text-align:right;white-space:pre">52</div>
<div style="position:absolute;left:281px;width:48px;top:1042px;height:19px;font:12.825px 'Liberation Mono', monospace;line-height:19px;color:#858585;text-align:right;white-space:pre">53</div>
<div style="position:absolute;left:281px;width:48px;top:1061px;height:19px;font:12.825px 'Liberation Mono', monospace;line-height:19px;color:#858585;text-align:right;white-space:pre">54</div>
<div style="position:absolute;left:281px;width:48px;top:1080px;height:19px;font:12.825px 'Liberation Mono', monospace;line-height:19px;color:#858585;text-align:right;white-space:pre">55</div>
<div style="position:absolute;left:354px;top:73px;height:19px;font:12.825px 'Liberation Mono', monospace;line-height:19px;white-space:pre"><span style="color:#6a9955">// Open Source Software; you can modify and/or share it under the terms of</span></div>
<div style="position:absolute;left:354px;top:92px;height:19px;font:12.825px 'Liberation Mono', monospace;line-height:19px;white-space:pre"><span style="color:#6a9955">// the WPILib BSD license file in the root directory of this project.</span></div>
<div style="position:absolute;left:354px;top:130px;height:19px;font:12.825px 'Liberation Mono', monospace;line-height:19px;white-space:pre"><span style="color:#569cd6">package</span> <span style="color:#4ec9b0">frc</span><span style="color:#d4d4d4">.</span><span style="color:#4ec9b0">robot</span><span style="color:#d4d4d4">.</span><span style="color:#4ec9b0">subsystems</span><span style="color:#d4d4d4">;</span></div>
<div style="position:absolute;left:354px;top:168px;height:19px;font:12.825px 'Liberation Mono', monospace;line-height:19px;white-space:pre"><span style="color:#569cd6">import</span> <span style="color:#4ec9b0">com</span><span style="color:#d4d4d4">.</span><span style="color:#4ec9b0">revrobotics</span><span style="color:#d4d4d4">.</span><span style="color:#4ec9b0">CANSparkMax</span><span style="color:#d4d4d4">;</span></div>
<div style="position:absolute;left:354px;top:187px;height:19px;font:12.825px 'Liberation Mono', monospace;line-height:19px;white-space:pre"><span style="color:#569cd6">import</span> <span style="color:#4ec9b0">com</span><span style="color:#d4d4d4">.</span><span style="color:#4ec9b0">revrobotics</span><span style="color:#d4d4d4">.</span><span style="color:#4ec9b0">CANSparkMaxLowLevel</span><span style="color:#d4d4d4">;</span></div>
<div style="position:absolute;left:354px;top:225px;height:19px;font:12.825px 'Liberation Mono', monospace;line-height:19px;white-space:pre"><span style="color:#569cd6">import</span> <span style="color:#4ec9b0">edu</span><span style="color:#d4d4d4">.</span><span style="color:#4ec9b0">wpi</span><span style="color:#d4d4d4">.</span><span style="color:#4ec9b0">first</span><span style="color:#d4d4d4">.</span><span style="color:#4ec9b0">wpilibj2</span><span style="color:#d4d4d4">.</span><span style="color:#4ec9b0">command</span><span style="color:#d4d4d4">.</span><span style="color:#4ec9b0">CommandBase</span><span style="color:#d4d4d4">;</span></div>
<div style="position:absolute;left:354px;top:244px;height:19px;font:12.825px 'Liberation Mono', monospace;line-height:19px;white-space:pre"><span style="color:#569cd6">import</span> <span style="color:#4ec9b0">edu</span><span style="color:#d4d4d4">.</span><span style="color:#4ec9b0">wpi</span><span style="color:#d4d4d4">.</span><span style="color:#4ec9b0">first</span><span style="color:#d4d4d4">.</span><span style="color:#4ec9b0">wpilibj2</span><span style="color:#d4d4d4">.</span><span style="color:#4ec9b0">command</span><span style="color:#d4d4d4">.</span><span style="color:#4ec9b0">SubsystemBase</span><span style="color:#d4d4d4">;</span></div>
<div style="position:absolute;left:354px;top:282px;height:19px;font:12.825px 'Liberation Mono', monospace;line-height:19px;white-space:pre"><span style="color:#569cd6">public</span> <span style="color:#569cd6">class</span> <span style="color:#4ec9b0">DrivetrainSubsystem</span> <span style="color:#569cd6">extends</span> <span style="color:#4ec9b0">SubsystemBase</span> <span style="color:#ffd700">{</span></div>
<div style="position:absolute;left:354px;top:301px;height:19px;font:12.825px 'Liberation Mono', monospace;line-height:19px;white-space:pre">  <span style="color:#6a9955">/** Creates a new ExampleSubsystem. */</span></div>
<div style="position:absolute;left:354px;top:320px;height:19px;font:12.825px 'Liberation Mono', monospace;line-height:19px;white-space:pre">  <span style="color:#569cd6">public</span> <span style="color:#dcdcaa">DrivetrainSubsystem</span><span style="color:#da70d6">(</span><span style="color:#da70d6">)</span> <span style="color:#da70d6">{</span></div>
<div style="position:absolute;left:354px;top:339px;height:19px;font:12.825px 'Liberation Mono', monospace;line-height:19px;white-space:pre">  <span style="color:#4ec9b0">CANSparkMax</span> <span style="color:#729cb3">leftFrontMotor</span> <span style="color:#d4d4d4">=</span> <span style="color:#c586c0">new</span> <span style="color:#dcdcaa">CANSparkMax</span><span style="color:#179fff">(</span><span style="display:inline-block;width:73.55px;vertical-align:top"><span style="display:inline-block;background:#3c3c3c;color:#e8e8e8;width:69.25px;height:17px;margin-top:0px;line-height:17px">deviceId:</span></span><span style="color:#b5cea8">1</span><span style="color:#d4d4d4">,</span><span style="color:#4ec9b0">CANSparkMaxLowLevel</span><span style="color:#d4d4d4">.</span><span style="color:#4ec9b0">MotorType</span><span style="color:#d4d4d4">.</span><span style="color:#4fc1ff">kBrushless</span><span style="color:#179fff">)</span><span style="color:#d4d4d4">;</span></div>
<div style="position:absolute;left:354px;top:358px;height:19px;font:12.825px 'Liberation Mono', monospace;line-height:19px;white-space:pre">  <span style="color:#4ec9b0">CANSparkMax</span> <span style="color:#729cb3">leftBackMotor</span> <span style="color:#d4d4d4">=</span> <span style="color:#c586c0">new</span> <span style="color:#dcdcaa">CANSparkMax</span><span style="color:#179fff">(</span><span style="display:inline-block;width:73.55px;vertical-align:top"><span style="display:inline-block;background:#3c3c3c;color:#e8e8e8;width:69.25px;height:17px;margin-top:0px;line-height:17px">deviceId:</span></span><span style="color:#b5cea8">2</span><span style="color:#d4d4d4">,</span><span style="color:#4ec9b0">CANSparkMaxLowLevel</span><span style="color:#d4d4d4">.</span><span style="color:#4ec9b0">MotorType</span><span style="color:#d4d4d4">.</span><span style="color:#4fc1ff">kBrushless</span><span style="color:#179fff">)</span><span style="color:#d4d4d4">;</span></div>
<div style="position:absolute;left:354px;top:377px;height:19px;font:12.825px 'Liberation Mono', monospace;line-height:19px;white-space:pre">  <span style="color:#4ec9b0">CANSparkMax</span> <span style="color:#729cb3">rightFrontMotor</span> <span style="color:#d4d4d4">=</span> <span style="color:#c586c0">new</span> <span style="color:#dcdcaa">CANSparkMax</span><span style="color:#179fff">(</span><span style="display:inline-block;width:73.55px;vertical-align:top"><span style="display:inline-block;background:#3c3c3c;color:#e8e8e8;width:69.25px;height:17px;margin-top:0px;line-height:17px">deviceId:</span></span><span style="color:#b5cea8">3</span><span style="color:#d4d4d4">,</span><span style="color:#4ec9b0">CANSparkMaxLowLevel</span><span style="color:#d4d4d4">.</span><span style="color:#4ec9b0">MotorType</span><span style="color:#d4d4d4">.</span><span style="color:#4fc1ff">kBrushless</span><span style="color:#179fff">)</span><span style="color:#d4d4d4">;</span></div>
<div style="position:absolute;left:354px;top:396px;height:19px;font:12.825px 'Liberation Mono', monospace;line-height:19px;white-space:pre">  <span style="color:#4ec9b0">CANSparkMax</span> <span style="color:#729cb3">rightBackMotor</span> <span style="color:#d4d4d4">=</span> <span style="color:#c586c0">new</span> <span style="color:#dcdcaa">CANSparkMax</span><span style="color:#179fff">(</span><span style="display:inline-block;width:73.55px;vertical-align:top"><span style="display:inline-block;background:#3c3c3c;color:#e8e8e8;width:69.25px;height:17px;margin-top:0px;line-height:17px">deviceId:</span></span><span style="color:#b5cea8">4</span><span style="color:#d4d4d4">,</span><span style="color:#4ec9b0">CANSparkMaxLowLevel</span><span style="color:#d4d4d4">.</span><span style="color:#4ec9b0">MotorType</span><span style="color:#d4d4d4">.</span><span style="color:#4fc1ff">kBrushless</span><span style="color:#179fff">)</span><span style="color:#d4d4d4">;</span></div>
<div style="position:absolute;left:354px;top:415px;height:19px;font:12.825px 'Liberation Mono', monospace;line-height:19px;white-space:pre">  <span style="color:#da70d6">}</span></div>
<div style="position:absolute;left:354px;top:434px;height:19px;font:12.825px 'Liberation Mono', monospace;line-height:19px;white-space:pre">  <span style="color:#6a9955">/**</span></div>
<div style="position:absolute;left:354px;top:453px;height:19px;font:12.825px 'Liberation Mono', monospace;line-height:19px;white-space:pre">   <span style="color:#6a9955">* Example command factory method.</span></div>
<div style="position:absolute;left:354px;top:472px;height:19px;font:12.825px 'Liberation Mono', monospace;line-height:19px;white-space:pre">   <span style="color:#6a9955">*</span></div>
<div style="position:absolute;left:354px;top:491px;height:19px;font:12.825px 'Liberation Mono', monospace;line-height:19px;white-space:pre">   <span style="color:#6a9955">* </span><span style="color:#569cd6">@return</span><span style="color:#6a9955"> a command</span></div>
<div style="position:absolute;left:354px;top:510px;height:19px;font:12.825px 'Liberation Mono', monospace;line-height:19px;white-space:pre">   <span style="color:#6a9955">*/</span></div>
<div style="position:absolute;left:354px;top:529px;height:19px;font:12.825px 'Liberation Mono', monospace;line-height:19px;white-space:pre">  <span style="color:#569cd6">public</span> <span style="color:#4ec9b0">CommandBase</span> <span style="color:#dcdcaa">exampleMethodCommand</span><span style="color:#da70d6">(</span><span style="color:#da70d6">)</span> <span style="color:#da70d6">{</span></div>
<div style="position:absolute;left:354px;top:548px;height:19px;font:12.825px 'Liberation Mono', monospace;line-height:19px;white-space:pre">    <span style="color:#6a9955">// Inline construction of command goes here.</span></div>
<div style="position:absolute;left:354px;top:567px;height:19px;font:12.825px 'Liberation Mono', monospace;line-height:19px;white-space:pre">    <span style="color:#6a9955">// Subsystem::RunOnce implicitly requires `this` subsystem.</span></div>
<div style="position:absolute;left:354px;top:586px;height:19px;font:12.825px 'Liberation Mono', monospace;line-height:19px;white-space:pre">    <span style="color:#c586c0">return</span> <span style="color:#dcdcaa">runOnce</span><span style="color:#179fff">(</span></div>
<div style="position:absolute;left:354px;top:605px;height:19px;font:12.825px 'Liberation Mono', monospace;line-height:19px;white-space:pre">        <span style="color:#ffd700">(</span><span style="color:#ffd700">)</span> <span style="color:#569cd6">-&gt;</span> <span style="color:#ffd700">{</span></div>
<div style="position:absolute;left:354px;top:624px;height:19px;font:12.825px 'Liberation Mono', monospace;line-height:19px;white-space:pre">          <span style="color:#6a9955">/* one-time action goes here */</span></div>
<div style="position:absolute;left:354px;top:643px;height:19px;font:12.825px 'Liberation Mono', monospace;line-height:19px;white-space:pre">        <span style="color:#ffd700">}</span><span style="color:#179fff">)</span><span style="color:#d4d4d4">;</span></div>
<div style="position:absolute;left:354px;top:662px;height:19px;font:12.825px 'Liberation Mono', monospace;line-height:19px;white-space:pre">  <span style="color:#da70d6">}</span></div>
<div style="position:absolute;left:354px;top:700px;height:19px;font:12.825px 'Liberation Mono', monospace;line-height:19px;white-space:pre">  <span style="color:#6a9955">/**</span></div>
<div style="position:absolute;left:354px;top:719px;height:19px;font:12.825px 'Liberation Mono', monospace;line-height:19px;white-space:pre">   <span style="color:#6a9955">* An example method querying a boolean state of the subsystem (for example, a digital sensor).</span></div>
<div style="position:absolute;left:354px;top:738px;height:19px;font:12.825px 'Liberation Mono', monospace;line-height:19px;white-space:pre">   <span style="color:#6a9955">*</span></div>
<div style="position:absolute;left:354px;top:757px;height:19px;font:12.825px 'Liberation Mono', monospace;line-height:19px;white-space:pre">   <span style="color:#6a9955">* </span><span style="color:#569cd6">@return</span><span style="color:#6a9955"> value of some boolean subsystem state, such as a digital sensor.</span></div>
<div style="position:absolute;left:354px;top:776px;height:19px;font:12.825px 'Liberation Mono', monospace;line-height:19px;white-space:pre">   <span style="color:#6a9955">*/</span></div>
<div style="position:absolute;left:354px;top:795px;height:19px;font:12.825px 'Liberation Mono', monospace;line-height:19px;white-space:pre">  <span style="color:#569cd6">public</span> <span style="color:#4ec9b0">boolean</span> <span style="color:#dcdcaa">exampleCondition</span><span style="color:#da70d6">(</span><span style="color:#da70d6">)</span> <span style="color:#da70d6">{</span></div>
<div style="position:absolute;left:354px;top:814px;height:19px;font:12.825px 'Liberation Mono', monospace;line-height:19px;white-space:pre">    <span style="color:#6a9955">// Query some boolean state, such as a digital sensor.</span></div>
<div style="position:absolute;left:354px;top:833px;height:19px;font:12.825px 'Liberation Mono', monospace;line-height:19px;white-space:pre">    <span style="color:#c586c0">return</span> <span style="color:#569cd6">false</span><span style="color:#d4d4d4">;</span></div>
<div style="position:absolute;left:354px;top:852px;height:19px;font:12.825px 'Liberation Mono', monospace;line-height:19px;white-space:pre">  <span style="color:#da70d6">}</span></div>
<div style="position:absolute;left:354px;top:890px;height:19px;font:12.825px 'Liberation Mono', monospace;line-height:19px;white-space:pre">  <span style="color:#d4d4d4">@</span><span style="color:#4ec9b0">Override</span></div>
<div style="position:absolute;left:354px;top:909px;height:19px;font:12.825px 'Liberation Mono', monospace;line-height:19px;white-space:pre">  <span style="color:#569cd6">public</span> <span style="color:#4ec9b0">void</span> <span style="color:#dcdcaa">periodic</span><span style="color:#da70d6">(</span><span style="color:#da70d6">)</span> <span style="color:#da70d6">{</span></div>
<div style="position:absolute;left:354px;top:928px;height:19px;font:12.825px 'Liberation Mono', monospace;line-height:19px;white-space:pre">    <span style="color:#6a9955">// This method will be called once per scheduler run</span></div>
<div style="position:absolute;left:354px;top:947px;height:19px;font:12.825px 'Liberation Mono', monospace;line-height:19px;white-space:pre">  <span style="color:#da70d6">}</span></div>
<div style="position:absolute;left:354px;top:985px;height:19px;font:12.825px 'Liberation Mono', monospace;line-height:19px;white-space:pre">  <span style="color:#d4d4d4">@</span><span style="color:#4ec9b0">Override</span></div>
<div style="position:absolute;left:354px;top:1004px;height:19px;font:12.825px 'Liberation Mono', monospace;line-height:19px;white-space:pre">  <span style="color:#569cd6">public</span> <span style="color:#4ec9b0">void</span> <span style="color:#dcdcaa">simulationPeriodic</span><span style="color:#da70d6">(</span><span style="color:#da70d6">)</span> <span style="color:#da70d6">{</span></div>
<div style="position:absolute;left:354px;top:1023px;height:19px;font:12.825px 'Liberation Mono', monospace;line-height:19px;white-space:pre">    <span style="color:#6a9955">// This method will be called once per scheduler run during simulation</span></div>
<div style="position:absolute;left:354px;top:1042px;height:19px;font:12.825px 'Liberation Mono', monospace;line-height:19px;white-space:pre">  <span style="color:#da70d6">}</span></div>
<div style="position:absolute;left:354px;top:1061px;height:19px;font:12.825px 'Liberation Mono', monospace;line-height:19px;white-space:pre"><span style="color:#ffd700">}</span></div>
<svg style="left:461.7px;top:353px" width="107.7" height="5"><path d="M0 2.5 L3 1 L6 4 L9 1 L12 4 L15 1 L18 4 L21 1 L24 4 L27 1 L30 4 L33 1 L36 4 L39 1 L42 4 L45 1 L48 4 L51 1 L54 4 L57 1 L60 4 L63 1 L66 4 L69 1 L72 4 L75 1 L78 4 L81 1 L84 4 L87 1 L90 4 L93 1 L96 4 L99 1 L102 4 L105 1" fill="none" stroke="#d8ad00" stroke-width="1.3" stroke-linejoin="round"/></svg>
<svg style="left:461.7px;top:372px" width="100.0" height="5"><path d="M0 2.5 L3 1 L6 4 L9 1 L12 4 L15 1 L18 4 L21 1 L24 4 L27 1 L30 4 L33 1 L36 4 L39 1 L42 4 L45 1 L48 4 L51 1 L54 4 L57 1 L60 4 L63 1 L66 4 L69 1 L72 4 L75 1 L78 4 L81 1 L84 4 L87 1 L90 4 L93 1 L96 4 L99 1" fill="none" stroke="#d8ad00" stroke-width="1.3" stroke-linejoin="round"/></svg>
<svg style="left:461.7px;top:391px" width="115.4" height="5"><path d="M0 2.5 L3 1 L6 4 L9 1 L12 4 L15 1 L18 4 L21 1 L24 4 L27 1 L30 4 L33 1 L36 4 L39 1 L42 4 L45 1 L48 4 L51 1 L54 4 L57 1 L60 4 L63 1 L66 4 L69 1 L72 4 L75 1 L78 4 L81 1 L84 4 L87 1 L90 4 L93 1 L96 4 L99 1 L102 4 L105 1 L108 4 L111 1 L114 4" fill="none" stroke="#d8ad00" stroke-width="1.3" stroke-linejoin="round"/></svg>
<svg style="left:461.7px;top:410px" width="107.7" height="5"><path d="M0 2.5 L3 1 L6 4 L9 1 L12 4 L15 1 L18 4 L21 1 L24 4 L27 1 L30 4 L33 1 L36 4 L39 1 L42 4 L45 1 L48 4 L51 1 L54 4 L57 1 L60 4 L63 1 L66 4 L69 1 L72 4 L75 1 L78 4 L81 1 L84 4 L87 1 L90 4 L93 1 L96 4 L99 1 L102 4 L105 1" fill="none" stroke="#d8ad00" stroke-width="1.3" stroke-linejoin="round"/></svg>
<svg style="left:356px;top:261px" width="14" height="16" viewBox="0 0 14 16"><path d="M7 1.4 C4.4 1.4 2.3 3.4 2.3 6 C2.3 7.7 3.2 8.7 4.2 9.6 V14.4 H9.8 V9.6 C10.8 8.7 11.7 7.7 11.7 6 C11.7 3.4 9.6 1.4 7 1.4 Z" fill="#ffcc00"/><circle cx="7" cy="12" r="0.9" fill="#1e1e1e"/></svg>
<svg style="left:0;top:0" width="2551" height="1160" viewBox="0 0 2551 1160"><rect x="2425" y="96" width="112" height="2" fill="#264f78" opacity="0.9"/><rect x="2425" y="102" width="112" height="8" fill="#8c7512"/><rect x="2425" y="74" width="2" height="2" fill="#6a9955" opacity="0.32"/><rect x="2428" y="74" width="4" height="2" fill="#6a9955" opacity="0.32"/><rect x="2433" y="74" width="6" height="2" fill="#6a9955" opacity="0.32"/><rect x="2440" y="74" width="9" height="2" fill="#6a9955" opacity="0.32"/><rect x="2450" y="74" width="3" height="2" fill="#6a9955" opacity="0.32"/><rect x="2454" y="74" width="3" height="2" fill="#6a9955" opacity="0.32"/><rect x="2458" y="74" width="6" height="2" fill="#6a9955" opacity="0.32"/><rect x="2465" y="74" width="6" height="2" fill="#6a9955" opacity="0.32"/><rect x="2472" y="74" width="5" height="2" fill="#6a9955" opacity="0.32"/><rect x="2478" y="74" width="2" height="2" fill="#6a9955" opacity="0.32"/><rect x="2481" y="74" width="5" height="2" fill="#6a9955" opacity="0.32"/><rect x="2487" y="74" width="3" height="2" fill="#6a9955" opacity="0.32"/><rect x="2491" y="74" width="5" height="2" fill="#6a9955" opacity="0.32"/><rect x="2497" y="74" width="2" height="2" fill="#6a9955" opacity="0.32"/><rect x="2425" y="76" width="2" height="2" fill="#6a9955" opacity="0.32"/><rect x="2428" y="76" width="3" height="2" fill="#6a9955" opacity="0.32"/><rect x="2432" y="76" width="6" height="2" fill="#6a9955" opacity="0.32"/><rect x="2439" y="76" width="3" height="2" fill="#6a9955" opacity="0.32"/><rect x="2443" y="76" width="7" height="2" fill="#6a9955" opacity="0.32"/><rect x="2451" y="76" width="4" height="2" fill="#6a9955" opacity="0.32"/><rect x="2456" y="76" width="2" height="2" fill="#6a9955" opacity="0.32"/><rect x="2459" y="76" width="3" height="2" fill="#6a9955" opacity="0.32"/><rect x="2463" y="76" width="4" height="2" fill="#6a9955" opacity="0.32"/><rect x="2468" y="76" width="9" height="2" fill="#6a9955" opacity="0.32"/><rect x="2478" y="76" width="2" height="2" fill="#6a9955" opacity="0.32"/><rect x="2481" y="76" width="4" height="2" fill="#6a9955" opacity="0.32"/><rect x="2486" y="76" width="8" height="2" fill="#6a9955" opacity="0.32"/><rect x="2425" y="80" width="7" height="2" fill="#569cd6" opacity="0.32"/><rect x="2433" y="80" width="3" height="2" fill="#4ec9b0" opacity="0.32"/><rect x="2436" y="80" width="1" height="2" fill="#d4d4d4" opacity="0.32"/><rect x="2437" y="80" width="5" height="2" fill="#4ec9b0" opacity="0.32"/><rect x="2442" y="80" width="1" height="2" fill="#d4d4d4" opacity="0.32"/><rect x="2443" y="80" width="10" height="2" fill="#4ec9b0" opacity="0.32"/><rect x="2453" y="80" width="1" height="2" fill="#d4d4d4" opacity="0.32"/><rect x="2425" y="84" width="6" height="2" fill="#569cd6" opacity="0.32"/><rect x="2432" y="84" width="3" height="2" fill="#4ec9b0" opacity="0.32"/><rect x="2435" y="84" width="1" height="2" fill="#d4d4d4" opacity="0.32"/><rect x="2436" y="84" width="11" height="2" fill="#4ec9b0" opacity="0.32"/><rect x="2447" y="84" width="1" height="2" fill="#d4d4d4" opacity="0.32"/><rect x="2448" y="84" width="11" height="2" fill="#4ec9b0" opacity="0.32"/><rect x="2459" y="84" width="1" height="2" fill="#d4d4d4" opacity="0.32"/><rect x="2425" y="86" width="6" height="2" fill="#569cd6" opacity="0.32"/><rect x="2432" y="86" width="3" height="2" fill="#4ec9b0" opacity="0.32"/><rect x="2435" y="86" width="1" height="2" fill="#d4d4d4" opacity="0.32"/><rect x="2436" y="86" width="11" height="2" fill="#4ec9b0" opacity="0.32"/><rect x="2447" y="86" width="1" height="2" fill="#d4d4d4" opacity="0.32"/><rect x="2448" y="86" width="19" height="2" fill="#4ec9b0" opacity="0.32"/><rect x="2467" y="86" width="1" height="2" fill="#d4d4d4" opacity="0.32"/><rect x="2425" y="90" width="6" height="2" fill="#569cd6" opacity="0.32"/><rect x="2432" y="90" width="3" height="2" fill="#4ec9b0" opacity="0.32"/><rect x="2435" y="90" width="1" height="2" fill="#d4d4d4" opacity="0.32"/><rect x="2436" y="90" width="3" height="2" fill="#4ec9b0" opacity="0.32"/><rect x="2439" y="90" width="1" height="2" fill="#d4d4d4" opacity="0.32"/><rect x="2440" y="90" width="5" height="2" fill="#4ec9b0" opacity="0.32"/><rect x="2445" y="90" width="1" height="2" fill="#d4d4d4" opacity="0.32"/><rect x="2446" y="90" width="8" height="2" fill="#4ec9b0" opacity="0.32"/><rect x="2454" y="90" width="1" height="2" fill="#d4d4d4" opacity="0.32"/><rect x="2455" y="90" width="7" height="2" fill="#4ec9b0" opacity="0.32"/><rect x="2462" y="90" width="1" height="2" fill="#d4d4d4" opacity="0.32"/><rect x="2463" y="90" width="11" height="2" fill="#4ec9b0" opacity="0.32"/><rect x="2474" y="90" width="1" height="2" fill="#d4d4d4" opacity="0.32"/><rect x="2425" y="92" width="6" height="2" fill="#569cd6" opacity="0.32"/><rect x="2432" y="92" width="3" height="2" fill="#4ec9b0" opacity="0.32"/><rect x="2435" y="92" width="1" height="2" fill="#d4d4d4" opacity="0.32"/><rect x="2436" y="92" width="3" height="2" fill="#4ec9b0" opacity="0.32"/><rect x="2439" y="92" width="1" height="2" fill="#d4d4d4" opacity="0.32"/><rect x="2440" y="92" width="5" height="2" fill="#4ec9b0" opacity="0.32"/><rect x="2445" y="92" width="1" height="2" fill="#d4d4d4" opacity="0.32"/><rect x="2446" y="92" width="8" height="2" fill="#4ec9b0" opacity="0.32"/><rect x="2454" y="92" width="1" height="2" fill="#d4d4d4" opacity="0.32"/><rect x="2455" y="92" width="7" height="2" fill="#4ec9b0" opacity="0.32"/><rect x="2462" y="92" width="1" height="2" fill="#d4d4d4" opacity="0.32"/><rect x="2463" y="92" width="13" height="2" fill="#4ec9b0" opacity="0.32"/><rect x="2476" y="92" width="1" height="2" fill="#d4d4d4" opacity="0.32"/><rect x="2425" y="96" width="6" height="2" fill="#569cd6" opacity="0.3"/><rect x="2432" y="96" width="5" height="2" fill="#569cd6" opacity="0.3"/><rect x="2438" y="96" width="19" height="2" fill="#4ec9b0" opacity="0.3"/><rect x="2458" y="96" width="7" height="2" fill="#569cd6" opacity="0.3"/><rect x="2466" y="96" width="13" height="2" fill="#4ec9b0" opacity="0.3"/><rect x="2480" y="96" width="1" height="2" fill="#d4d4d4" opacity="0.3"/><rect x="2427" y="98" width="3" height="2" fill="#6a9955" opacity="0.32"/><rect x="2431" y="98" width="7" height="2" fill="#6a9955" opacity="0.32"/><rect x="2439" y="98" width="1" height="2" fill="#6a9955" opacity="0.32"/><rect x="2441" y="98" width="3" height="2" fill="#6a9955" opacity="0.32"/><rect x="2445" y="98" width="17" height="2" fill="#6a9955" opacity="0.32"/><rect x="2463" y="98" width="2" height="2" fill="#6a9955" opacity="0.32"/><rect x="2427" y="100" width="6" height="2" fill="#569cd6" opacity="0.32"/><rect x="2434" y="100" width="19" height="2" fill="#dcdcaa" opacity="0.32"/><rect x="2453" y="100" width="1" height="2" fill="#d4d4d4" opacity="0.32"/><rect x="2454" y="100" width="1" height="2" fill="#d4d4d4" opacity="0.32"/><rect x="2456" y="100" width="1" height="2" fill="#d4d4d4" opacity="0.32"/><rect x="2427" y="102" width="11" height="2" fill="#c8b030" opacity="0.55"/><rect x="2439" y="102" width="14" height="2" fill="#c8b030" opacity="0.55"/><rect x="2454" y="102" width="1" height="2" fill="#c8b030" opacity="0.55"/><rect x="2456" y="102" width="3" height="2" fill="#c8b030" opacity="0.55"/><rect x="2460" y="102" width="11" height="2" fill="#c8b030" opacity="0.55"/><rect x="2471" y="102" width="1" height="2" fill="#c8b030" opacity="0.55"/><rect x="2472" y="102" width="1" height="2" fill="#c8b030" opacity="0.55"/><rect x="2473" y="102" width="1" height="2" fill="#c8b030" opacity="0.55"/><rect x="2474" y="102" width="19" height="2" fill="#c8b030" opacity="0.55"/><rect x="2493" y="102" width="1" height="2" fill="#c8b030" opacity="0.55"/><rect x="2494" y="102" width="9" height="2" fill="#c8b030" opacity="0.55"/><rect x="2503" y="102" width="1" height="2" fill="#c8b030" opacity="0.55"/><rect x="2504" y="102" width="10" height="2" fill="#c8b030" opacity="0.55"/><rect x="2514" y="102" width="1" height="2" fill="#c8b030" opacity="0.55"/><rect x="2515" y="102" width="1" height="2" fill="#c8b030" opacity="0.55"/><rect x="2427" y="104" width="11" height="2" fill="#c8b030" opacity="0.55"/><rect x="2439" y="104" width="13" height="2" fill="#c8b030" opacity="0.55"/><rect x="2453" y="104" width="1" height="2" fill="#c8b030" opacity="0.55"/><rect x="2455" y="104" width="3" height="2" fill="#c8b030" opacity="0.55"/><rect x="2459" y="104" width="11" height="2" fill="#c8b030" opacity="0.55"/><rect x="2470" y="104" width="1" height="2" fill="#c8b030" opacity="0.55"/><rect x="2471" y="104" width="1" height="2" fill="#c8b030" opacity="0.55"/><rect x="2472" y="104" width="1" height="2" fill="#c8b030" opacity="0.55"/><rect x="2473" y="104" width="19" height="2" fill="#c8b030" opacity="0.55"/><rect x="2492" y="104" width="1" height="2" fill="#c8b030" opacity="0.55"/><rect x="2493" y="104" width="9" height="2" fill="#c8b030" opacity="0.55"/><rect x="2502" y="104" width="1" height="2" fill="#c8b030" opacity="0.55"/><rect x="2503" y="104" width="10" height="2" fill="#c8b030" opacity="0.55"/><rect x="2513" y="104" width="1" height="2" fill="#c8b030" opacity="0.55"/><rect x="2514" y="104" width="1" height="2" fill="#c8b030" opacity="0.55"/><rect x="2427" y="106" width="11" height="2" fill="#c8b030" opacity="0.55"/><rect x="2439" y="106" width="15" height="2" fill="#c8b030" opacity="0.55"/><rect x="2455" y="106" width="1" height="2" fill="#c8b030" opacity="0.55"/><rect x="2457" y="106" width="3" height="2" fill="#c8b030" opacity="0.55"/><rect x="2461" y="106" width="11" height="2" fill="#c8b030" opacity="0.55"/><rect x="2472" y="106" width="1" height="2" fill="#c8b030" opacity="0.55"/><rect x="2473" y="106" width="1" height="2" fill="#c8b030" opacity="0.55"/><rect x="2474" y="106" width="1" height="2" fill="#c8b030" opacity="0.55"/><rect x="2475" y="106" width="19" height="2" fill="#c8b030" opacity="0.55"/><rect x="2494" y="106" width="1" height="2" fill="#c8b030" opacity="0.55"/><rect x="2495" y="106" width="9" height="2" fill="#c8b030" opacity="0.55"/><rect x="2504" y="106" width="1" height="2" fill="#c8b030" opacity="0.55"/><rect x="2505" y="106" width="10" height="2" fill="#c8b030" opacity="0.55"/><rect x="2515" y="106" width="1" height="2" fill="#c8b030" opacity="0.55"/><rect x="2516" y="106" width="1" height="2" fill="#c8b030" opacity="0.55"/><rect x="2427" y="108" width="11" height="2" fill="#c8b030" opacity="0.55"/><rect x="2439" y="108" width="14" height="2" fill="#c8b030" opacity="0.55"/><rect x="2454" y="108" width="1" height="2" fill="#c8b030" opacity="0.55"/><rect x="2456" y="108" width="3" height="2" fill="#c8b030" opacity="0.55"/><rect x="2460" y="108" width="11" height="2" fill="#c8b030" opacity="0.55"/><rect x="2471" y="108" width="1" height="2" fill="#c8b030" opacity="0.55"/><rect x="2472" y="108" width="1" height="2" fill="#c8b030" opacity="0.55"/><rect x="2473" y="108" width="1" height="2" fill="#c8b030" opacity="0.55"/><rect x="2474" y="108" width="19" height="2" fill="#c8b030" opacity="0.55"/><rect x="2493" y="108" width="1" height="2" fill="#c8b030" opacity="0.55"/><rect x="2494" y="108" width="9" height="2" fill="#c8b030" opacity="0.55"/><rect x="2503" y="108" width="1" height="2" fill="#c8b030" opacity="0.55"/><rect x="2504" y="108" width="10" height="2" fill="#c8b030" opacity="0.55"/><rect x="2514" y="108" width="1" height="2" fill="#c8b030" opacity="0.55"/><rect x="2515" y="108" width="1" height="2" fill="#c8b030" opacity="0.55"/><rect x="2427" y="110" width="1" height="2" fill="#d4d4d4" opacity="0.32"/><rect x="2427" y="112" width="3" height="2" fill="#6a9955" opacity="0.32"/><rect x="2428" y="114" width="1" height="2" fill="#6a9955" opacity="0.32"/><rect x="2430" y="114" width="7" height="2" fill="#6a9955" opacity="0.32"/><rect x="2438" y="114" width="7" height="2" fill="#6a9955" opacity="0.32"/><rect x="2446" y="114" width="7" height="2" fill="#6a9955" opacity="0.32"/><rect x="2454" y="114" width="7" height="2" fill="#6a9955" opacity="0.32"/><rect x="2428" y="116" width="1" height="2" fill="#6a9955" opacity="0.32"/><rect x="2428" y="118" width="1" height="2" fill="#6a9955" opacity="0.32"/><rect x="2430" y="118" width="7" height="2" fill="#569cd6" opacity="0.32"/><rect x="2438" y="118" width="1" height="2" fill="#6a9955" opacity="0.32"/><rect x="2440" y="118" width="7" height="2" fill="#6a9955" opacity="0.32"/><rect x="2428" y="120" width="2" height="2" fill="#6a9955" opacity="0.32"/><rect x="2427" y="122" width="6" height="2" fill="#569cd6" opacity="0.32"/><rect x="2434" y="122" width="11" height="2" fill="#4ec9b0" opacity="0.32"/><rect x="2446" y="122" width="20" height="2" fill="#dcdcaa" opacity="0.32"/><rect x="2466" y="122" width="1" height="2" fill="#d4d4d4" opacity="0.32"/><rect x="2467" y="122" width="1" height="2" fill="#d4d4d4" opacity="0.32"/><rect x="2469" y="122" width="1" height="2" fill="#d4d4d4" opacity="0.32"/><rect x="2429" y="124" width="2" height="2" fill="#6a9955" opacity="0.32"/><rect x="2432" y="124" width="6" height="2" fill="#6a9955" opacity="0.32"/><rect x="2439" y="124" width="12" height="2" fill="#6a9955" opacity="0.32"/><rect x="2452" y="124" width="2" height="2" fill="#6a9955" opacity="0.32"/><rect x="2455" y="124" width="7" height="2" fill="#6a9955" opacity="0.32"/><rect x="2463" y="124" width="4" height="2" fill="#6a9955" opacity="0.32"/><rect x="2468" y="124" width="5" height="2" fill="#6a9955" opacity="0.32"/><rect x="2429" y="126" width="2" height="2" fill="#6a9955" opacity="0.32"/><rect x="2432" y="126" width="18" height="2" fill="#6a9955" opacity="0.32"/><rect x="2451" y="126" width="10" height="2" fill="#6a9955" opacity="0.32"/><rect x="2462" y="126" width="8" height="2" fill="#6a9955" opacity="0.32"/><rect x="2471" y="126" width="6" height="2" fill="#6a9955" opacity="0.32"/><rect x="2478" y="126" width="10" height="2" fill="#6a9955" opacity="0.32"/><rect x="2429" y="128" width="6" height="2" fill="#c586c0" opacity="0.32"/><rect x="2436" y="128" width="7" height="2" fill="#dcdcaa" opacity="0.32"/><rect x="2443" y="128" width="1" height="2" fill="#d4d4d4" opacity="0.32"/><rect x="2433" y="130" width="1" height="2" fill="#d4d4d4" opacity="0.32"/><rect x="2434" y="130" width="1" height="2" fill="#d4d4d4" opacity="0.32"/><rect x="2436" y="130" width="2" height="2" fill="#569cd6" opacity="0.32"/><rect x="2439" y="130" width="1" height="2" fill="#d4d4d4" opacity="0.32"/><rect x="2435" y="132" width="2" height="2" fill="#6a9955" opacity="0.32"/><rect x="2438" y="132" width="8" height="2" fill="#6a9955" opacity="0.32"/><rect x="2447" y="132" width="6" height="2" fill="#6a9955" opacity="0.32"/><rect x="2454" y="132" width="4" height="2" fill="#6a9955" opacity="0.32"/><rect x="2459" y="132" width="4" height="2" fill="#6a9955" opacity="0.32"/><rect x="2464" y="132" width="2" height="2" fill="#6a9955" opacity="0.32"/><rect x="2433" y="134" width="1" height="2" fill="#d4d4d4" opacity="0.32"/><rect x="2434" y="134" width="1" height="2" fill="#d4d4d4" opacity="0.32"/><rect x="2435" y="134" width="1" height="2" fill="#d4d4d4" opacity="0.32"/><rect x="2427" y="136" width="1" height="2" fill="#d4d4d4" opacity="0.32"/><rect x="2427" y="140" width="3" height="2" fill="#6a9955" opacity="0.32"/><rect x="2428" y="142" width="1" height="2" fill="#6a9955" opacity="0.32"/><rect x="2430" y="142" width="2" height="2" fill="#6a9955" opacity="0.32"/><rect x="2433" y="142" width="7" height="2" fill="#6a9955" opacity="0.32"/><rect x="2441" y="142" width="6" height="2" fill="#6a9955" opacity="0.32"/><rect x="2448" y="142" width="8" height="2" fill="#6a9955" opacity="0.32"/><rect x="2457" y="142" width="1" height="2" fill="#6a9955" opacity="0.32"/><rect x="2459" y="142" width="7" height="2" fill="#6a9955" opacity="0.32"/><rect x="2467" y="142" width="5" height="2" fill="#6a9955" opacity="0.32"/><rect x="2473" y="142" width="2" height="2" fill="#6a9955" opacity="0.32"/><rect x="2476" y="142" width="3" height="2" fill="#6a9955" opacity="0.32"/><rect x="2480" y="142" width="9" height="2" fill="#6a9955" opacity="0.32"/><rect x="2490" y="142" width="4" height="2" fill="#6a9955" opacity="0.32"/><rect x="2495" y="142" width="8" height="2" fill="#6a9955" opacity="0.32"/><rect x="2504" y="142" width="1" height="2" fill="#6a9955" opacity="0.32"/><rect x="2506" y="142" width="7" height="2" fill="#6a9955" opacity="0.32"/><rect x="2514" y="142" width="8" height="2" fill="#6a9955" opacity="0.32"/><rect x="2428" y="144" width="1" height="2" fill="#6a9955" opacity="0.32"/><rect x="2428" y="146" width="1" height="2" fill="#6a9955" opacity="0.32"/><rect x="2430" y="146" width="7" height="2" fill="#569cd6" opacity="0.32"/><rect x="2438" y="146" width="5" height="2" fill="#6a9955" opacity="0.32"/><rect x="2444" y="146" width="2" height="2" fill="#6a9955" opacity="0.32"/><rect x="2447" y="146" width="4" height="2" fill="#6a9955" opacity="0.32"/><rect x="2452" y="146" width="7" height="2" fill="#6a9955" opacity="0.32"/><rect x="2460" y="146" width="9" height="2" fill="#6a9955" opacity="0.32"/><rect x="2470" y="146" width="6" height="2" fill="#6a9955" opacity="0.32"/><rect x="2477" y="146" width="4" height="2" fill="#6a9955" opacity="0.32"/><rect x="2482" y="146" width="2" height="2" fill="#6a9955" opacity="0.32"/><rect x="2485" y="146" width="1" height="2" fill="#6a9955" opacity="0.32"/><rect x="2487" y="146" width="7" height="2" fill="#6a9955" opacity="0.32"/><rect x="2495" y="146" width="7" height="2" fill="#6a9955" opacity="0.32"/><rect x="2428" y="148" width="2" height="2" fill="#6a9955" opacity="0.32"/><rect x="2427" y="150" width="6" height="2" fill="#569cd6" opacity="0.32"/><rect x="2434" y="150" width="7" height="2" fill="#4ec9b0" opacity="0.32"/><rect x="2442" y="150" width="16" height="2" fill="#dcdcaa" opacity="0.32"/><rect x="2458" y="150" width="1" height="2" fill="#d4d4d4" opacity="0.32"/><rect x="2459" y="150" width="1" height="2" fill="#d4d4d4" opacity="0.32"/><rect x="2461" y="150" width="1" height="2" fill="#d4d4d4" opacity="0.32"/><rect x="2429" y="152" width="2" height="2" fill="#6a9955" opacity="0.32"/><rect x="2432" y="152" width="5" height="2" fill="#6a9955" opacity="0.32"/><rect x="2438" y="152" width="4" height="2" fill="#6a9955" opacity="0.32"/><rect x="2443" y="152" width="7" height="2" fill="#6a9955" opacity="0.32"/><rect x="2451" y="152" width="6" height="2" fill="#6a9955" opacity="0.32"/><rect x="2458" y="152" width="4" height="2" fill="#6a9955" opacity="0.32"/><rect x="2463" y="152" width="2" height="2" fill="#6a9955" opacity="0.32"/><rect x="2466" y="152" width="1" height="2" fill="#6a9955" opacity="0.32"/><rect x="2468" y="152" width="7" height="2" fill="#6a9955" opacity="0.32"/><rect x="2476" y="152" width="7" height="2" fill="#6a9955" opacity="0.32"/><rect x="2429" y="154" width="6" height="2" fill="#c586c0" opacity="0.32"/><rect x="2436" y="154" width="5" height="2" fill="#569cd6" opacity="0.32"/><rect x="2441" y="154" width="1" height="2" fill="#d4d4d4" opacity="0.32"/><rect x="2427" y="156" width="1" height="2" fill="#d4d4d4" opacity="0.32"/><rect x="2427" y="160" width="1" height="2" fill="#d4d4d4" opacity="0.32"/><rect x="2428" y="160" width="8" height="2" fill="#4ec9b0" opacity="0.32"/><rect x="2427" y="162" width="6" height="2" fill="#569cd6" opacity="0.32"/><rect x="2434" y="162" width="4" height="2" fill="#4ec9b0" opacity="0.32"/><rect x="2439" y="162" width="8" height="2" fill="#dcdcaa" opacity="0.32"/><rect x="2447" y="162" width="1" height="2" fill="#d4d4d4" opacity="0.32"/><rect x="2448" y="162" width="1" height="2" fill="#d4d4d4" opacity="0.32"/><rect x="2450" y="162" width="1" height="2" fill="#d4d4d4" opacity="0.32"/><rect x="2429" y="164" width="2" height="2" fill="#6a9955" opacity="0.32"/><rect x="2432" y="164" width="4" height="2" fill="#6a9955" opacity="0.32"/><rect x="2437" y="164" width="6" height="2" fill="#6a9955" opacity="0.32"/><rect x="2444" y="164" width="4" height="2" fill="#6a9955" opacity="0.32"/><rect x="2449" y="164" width="2" height="2" fill="#6a9955" opacity="0.32"/><rect x="2452" y="164" width="6" height="2" fill="#6a9955" opacity="0.32"/><rect x="2459" y="164" width="4" height="2" fill="#6a9955" opacity="0.32"/><rect x="2464" y="164" width="3" height="2" fill="#6a9955" opacity="0.32"/><rect x="2468" y="164" width="9" height="2" fill="#6a9955" opacity="0.32"/><rect x="2478" y="164" width="3" height="2" fill="#6a9955" opacity="0.32"/><rect x="2427" y="166" width="1" height="2" fill="#d4d4d4" opacity="0.32"/><rect x="2427" y="170" width="1" height="2" fill="#d4d4d4" opacity="0.32"/><rect x="2428" y="170" width="8" height="2" fill="#4ec9b0" opacity="0.32"/><rect x="2427" y="172" width="6" height="2" fill="#569cd6" opacity="0.32"/><rect x="2434" y="172" width="4" height="2" fill="#4ec9b0" opacity="0.32"/><rect x="2439" y="172" width="18" height="2" fill="#dcdcaa" opacity="0.32"/><rect x="2457" y="172" width="1" height="2" fill="#d4d4d4" opacity="0.32"/><rect x="2458" y="172" width="1" height="2" fill="#d4d4d4" opacity="0.32"/><rect x="2460" y="172" width="1" height="2" fill="#d4d4d4" opacity="0.32"/><rect x="2429" y="174" width="2" height="2" fill="#6a9955" opacity="0.32"/><rect x="2432" y="174" width="4" height="2" fill="#6a9955" opacity="0.32"/><rect x="2437" y="174" width="6" height="2" fill="#6a9955" opacity="0.32"/><rect x="2444" y="174" width="4" height="2" fill="#6a9955" opacity="0.32"/><rect x="2449" y="174" width="2" height="2" fill="#6a9955" opacity="0.32"/><rect x="2452" y="174" width="6" height="2" fill="#6a9955" opacity="0.32"/><rect x="2459" y="174" width="4" height="2" fill="#6a9955" opacity="0.32"/><rect x="2464" y="174" width="3" height="2" fill="#6a9955" opacity="0.32"/><rect x="2468" y="174" width="9" height="2" fill="#6a9955" opacity="0.32"/><rect x="2478" y="174" width="3" height="2" fill="#6a9955" opacity="0.32"/><rect x="2482" y="174" width="6" height="2" fill="#6a9955" opacity="0.32"/><rect x="2489" y="174" width="10" height="2" fill="#6a9955" opacity="0.32"/><rect x="2427" y="176" width="1" height="2" fill="#d4d4d4" opacity="0.32"/><rect x="2425" y="178" width="1" height="2" fill="#d4d4d4" opacity="0.32"/><rect x="2425" y="72" width="2" height="2" fill="#6a9955" opacity="0.32"/><rect x="2428" y="72" width="9" height="2" fill="#6a9955" opacity="0.32"/><rect x="2438" y="72" width="3" height="2" fill="#6a9955" opacity="0.32"/><rect x="2442" y="72" width="5" height="2" fill="#6a9955" opacity="0.32"/><rect x="2448" y="72" width="3" height="2" fill="#6a9955" opacity="0.32"/><rect x="2452" y="72" width="5" height="2" fill="#6a9955" opacity="0.32"/><rect x="2458" y="72" width="6" height="2" fill="#6a9955" opacity="0.32"/><rect x="2465" y="72" width="13" height="2" fill="#6a9955" opacity="0.32"/><rect x="2439" y="102" width="14" height="8" fill="#d8b000"/></svg>
<div style="position:absolute;left:2537px;top:72px;width:1px;height:1088px;background:#3b3b3b;"></div>
<div style="position:absolute;left:2538px;top:72px;width:13px;height:10px;background:#1e1e1e;"></div>
<div style="position:absolute;left:2538px;top:82px;width:13px;height:559px;background:#464646;"></div>
<div style="position:absolute;left:2538px;top:188px;width:13px;height:2px;background:#a0a0a0;"></div>
<div style="position:absolute;left:2547px;top:218px;width:4px;height:39px;background:#b89d2c;"></div>
<div style="position:absolute;left:306px;top:1173.99px;font:400 11px 'Liberation Sans', sans-serif;line-height:11px;color:#e7e7e7;white-space:pre;transform:scaleX(0.8703);transform-origin:0 0;">PROBLEMS</div>
<div style="position:absolute;left:304px;top:1191px;width:84px;height:1px;background:#e7e7e7;"></div>
<svg style="left:370px;top:1170px" width="18" height="18"><circle cx="9" cy="9" r="9" fill="#4d4d4d"/><text x="9" y="13" font-family="Liberation Sans" font-size="11" fill="#ffffff" text-anchor="middle">8</text></svg>
<div style="position:absolute;left:410px;top:1173.99px;font:400 11px 'Liberation Sans', sans-serif;line-height:11px;color:#969696;white-space:pre;transform:scaleX(0.8846);transform-origin:0 0;">OUTPUT</div>
<div style="position:absolute;left:475px;top:1173.99px;font:400 11px 'Liberation Sans', sans-serif;line-height:11px;color:#969696;white-space:pre;transform:scaleX(0.8857);transform-origin:0 0;">DEBUG CONSOLE</div>
<div style="position:absolute;left:584px;top:1173.99px;font:400 11px 'Liberation Sans', sans-serif;line-height:11px;color:#969696;white-space:pre;transform:scaleX(0.9169);transform-origin:0 0;">TERMINAL</div>
<svg style="left:299px;top:1202px" width="12" height="8"><path d="M1 1.5 L5.5 6 L10 1.5" fill="none" stroke="#c5c5c5" stroke-width="1.2"/></svg>
<svg style="left:322px;top:1201px" width="10" height="13" viewBox="0 0 10 13"><path d="M6.6 0.2 V7.6 C6.6 10.4 5.2 11.4 3.4 11.4 C2.2 11.4 1.2 10.8 0.6 10.1" fill="none" stroke="#e04549" stroke-width="2.3"/></svg>
<div style="position:absolute;left:338px;top:1200.55px;font:400 12.7px 'Liberation Sans', sans-serif;line-height:12.7px;color:#cccccc;white-space:pre;">DrivetrainSubsystem.java</div>
<div style="position:absolute;left:487px;top:1201.23px;font:400 11.9px 'Liberation Sans', sans-serif;line-height:11.9px;color:#a6a6a6;white-space:pre;transform:scaleX(0.9990);transform-origin:0 0;">src\main\java\frc\robot\subsystems</div>
<svg style="left:679px;top:1198px" width="18" height="18"><circle cx="9" cy="9" r="9" fill="#4d4d4d"/><text x="9" y="13" font-family="Liberation Sans" font-size="11" fill="#ffffff" text-anchor="middle">8</text></svg>
<svg style="left:330px;top:1221px" width="16" height="14" viewBox="0 0 16 14"><path d="M7.5 1.2 L14 12.8 H1 Z" fill="none" stroke="#cca700" stroke-width="1.3" stroke-linejoin="round"/><path d="M7.5 5 V9" stroke="#cca700" stroke-width="1.4"/><circle cx="7.5" cy="10.8" r="0.8" fill="#cca700"/></svg>
<svg style="left:330px;top:1243px" width="16" height="14" viewBox="0 0 16 14"><path d="M7.5 1.2 L14 12.8 H1 Z" fill="none" stroke="#cca700" stroke-width="1.3" stroke-linejoin="round"/><path d="M7.5 5 V9" stroke="#cca700" stroke-width="1.4"/><circle cx="7.5" cy="10.8" r="0.8" fill="#cca700"/></svg>
<svg style="left:330px;top:1265px" width="16" height="14" viewBox="0 0 16 14"><path d="M7.5 1.2 L14 12.8 H1 Z" fill="none" stroke="#cca700" stroke-width="1.3" stroke-linejoin="round"/><path d="M7.5 5 V9" stroke="#cca700" stroke-width="1.4"/><circle cx="7.5" cy="10.8" r="0.8" fill="#cca700"/></svg>
<svg style="left:330px;top:1287px" width="16" height="14" viewBox="0 0 16 14"><path d="M7.5 1.2 L14 12.8 H1 Z" fill="none" stroke="#cca700" stroke-width="1.3" stroke-linejoin="round"/><path d="M7.5 5 V9" stroke="#cca700" stroke-width="1.4"/><circle cx="7.5" cy="10.8" r="0.8" fill="#cca700"/></svg>
<svg style="left:330px;top:1309px" width="16" height="14" viewBox="0 0 16 14"><path d="M7.5 1.2 L14 12.8 H1 Z" fill="none" stroke="#cca700" stroke-width="1.3" stroke-linejoin="round"/><path d="M7.5 5 V9" stroke="#cca700" stroke-width="1.4"/><circle cx="7.5" cy="10.8" r="0.8" fill="#cca700"/></svg>
<svg style="left:330px;top:1331px" width="16" height="14" viewBox="0 0 16 14"><path d="M7.5 1.2 L14 12.8 H1 Z" fill="none" stroke="#cca700" stroke-width="1.3" stroke-linejoin="round"/><path d="M7.5 5 V9" stroke="#cca700" stroke-width="1.4"/><circle cx="7.5" cy="10.8" r="0.8" fill="#cca700"/></svg>
<svg style="left:330px;top:1353px" width="16" height="14" viewBox="0 0 16 14"><path d="M7.5 1.2 L14 12.8 H1 Z" fill="none" stroke="#cca700" stroke-width="1.3" stroke-linejoin="round"/><path d="M7.5 5 V9" stroke="#cca700" stroke-width="1.4"/><circle cx="7.5" cy="10.8" r="0.8" fill="#cca700"/></svg>
<div style="position:absolute;left:352px;top:1223.05px;font:12.7px 'Liberation Sans', sans-serif;line-height:12.7px;color:#cccccc;white-space:pre">Resource leak: &#x27;leftFrontMotor&#x27; is never closed<span style="color:#a6a6a6;margin-left:6px">Java(536871799)</span><span style="color:#a6a6a6;margin-left:6px">[Ln 16, Col 15]</span></div>
<div style="position:absolute;left:352px;top:1245.05px;font:12.7px 'Liberation Sans', sans-serif;line-height:12.7px;color:#cccccc;white-space:pre">The value of the local variable leftFrontMotor is not used<span style="color:#a6a6a6;margin-left:6px">Java(536870973)</span><span style="color:#a6a6a6;margin-left:6px">[Ln 16, Col 15]</span></div>
<div style="position:absolute;left:352px;top:1267.05px;font:12.7px 'Liberation Sans', sans-serif;line-height:12.7px;color:#cccccc;white-space:pre">Resource leak: &#x27;leftBackMotor&#x27; is never closed<span style="color:#a6a6a6;margin-left:6px">Java(536871799)</span><span style="color:#a6a6a6;margin-left:6px">[Ln 17, Col 15]</span></div>
<div style="position:absolute;left:352px;top:1289.05px;font:12.7px 'Liberation Sans', sans-serif;line-height:12.7px;color:#cccccc;white-space:pre">The value of the local variable leftBackMotor is not used<span style="color:#a6a6a6;margin-left:6px">Java(536870973)</span><span style="color:#a6a6a6;margin-left:6px">[Ln 17, Col 15]</span></div>
<div style="position:absolute;left:352px;top:1311.05px;font:12.7px 'Liberation Sans', sans-serif;line-height:12.7px;color:#cccccc;white-space:pre">Resource leak: &#x27;rightFrontMotor&#x27; is never closed<span style="color:#a6a6a6;margin-left:6px">Java(536871799)</span><span style="color:#a6a6a6;margin-left:6px">[Ln 18, Col 15]</span></div>
<div style="position:absolute;left:352px;top:1333.05px;font:12.7px 'Liberation Sans', sans-serif;line-height:12.7px;color:#cccccc;white-space:pre">The value of the local variable rightFrontMotor is not used<span style="color:#a6a6a6;margin-left:6px">Java(536870973)</span><span style="color:#a6a6a6;margin-left:6px">[Ln 18, Col 15]</span></div>
<div style="position:absolute;left:352px;top:1355.05px;font:12.7px 'Liberation Sans', sans-serif;line-height:12.7px;color:#cccccc;white-space:pre">Resource leak: &#x27;rightBackMotor&#x27; is never closed<span style="color:#a6a6a6;margin-left:6px">Java(536871799)</span><span style="color:#a6a6a6;margin-left:6px">[Ln 19, Col 15]</span></div>
<div style="position:absolute;left:2143px;top:1167px;width:300px;height:24px;background:#3c3c3c;border-radius:2px;"></div>
<div style="position:absolute;left:2150px;top:1174.05px;font:400 12.7px 'Liberation Sans', sans-serif;line-height:12.7px;color:#a6a6a6;white-space:pre;transform:scaleX(0.9472);transform-origin:0 0;">Filter (e.g. text, **/*.ts, !**/node_modules/**)</div>
<svg style="left:2415px;top:1165px" width="136" height="28" viewBox="2415 1165 136 28"><g fill="none" stroke="#c5c5c5" stroke-width="1.1">
<path d="M2421.5 1172.5 H2434.5 L2429.5 1178.5 V1185 L2426.5 1183.5 V1178.5 Z"/>
<rect x="2451.5" y="1177.5" width="8" height="7"/><path d="M2454.5 1177.5 V1174.5 H2462.5 V1181.5 H2459.5 M2453.5 1181 H2457.5"/>
<path d="M2477 1174.5 H2489 M2477 1177.5 H2489 M2477 1180.5 H2486 M2477 1183.5 H2489"/>
<path d="M2504.5 1182 L2509.5 1177 L2514.5 1182"/>
<path d="M2528 1173.5 L2537 1182.5 M2537 1173.5 L2528 1182.5"/>
</g></svg>
<div style="position:absolute;left:0px;top:1363px;width:2551px;height:22px;background:#007acc;"></div>
<svg style="left:0;top:1363px" width="60" height="22" viewBox="0 0 60 22"><g fill="none" stroke="#ffffff" stroke-width="1.1">
<circle cx="13" cy="11" r="5.8"/><path d="M10.5 8.5 L15.5 13.5 M15.5 8.5 L10.5 13.5"/>
<path d="M39.5 5.2 L45.5 16.2 H33.5 Z" stroke-linejoin="round"/><path d="M39.5 9 V12.5"/></g><circle cx="39.5" cy="14.2" r="0.7" fill="#fff"/></svg>
<div style="position:absolute;left:23px;top:1369.34px;font:400 12px 'Liberation Sans', sans-serif;line-height:12px;color:#ffffff;white-space:pre;">0</div>
<div style="position:absolute;left:50px;top:1369.34px;font:400 12px 'Liberation Sans', sans-serif;line-height:12px;color:#ffffff;white-space:pre;">8</div>
<div style="position:absolute;left:2165px;top:1369.34px;font:400 12px 'Liberation Sans', sans-serif;line-height:12px;color:#ffffff;white-space:pre;transform:scaleX(0.9581);transform-origin:0 0;">Ln 13, Col 7</div>
<div style="position:absolute;left:2243px;top:1369.34px;font:400 12px 'Liberation Sans', sans-serif;line-height:12px;color:#ffffff;white-space:pre;transform:scaleX(0.9182);transform-origin:0 0;">Spaces: 2</div>
<div style="position:absolute;left:2308px;top:1369.34px;font:400 12px 'Liberation Sans', sans-serif;line-height:12px;color:#ffffff;white-space:pre;transform:scaleX(0.9412);transform-origin:0 0;">UTF-8</div>
<div style="position:absolute;left:2355px;top:1369.34px;font:400 12px 'Liberation Sans', sans-serif;line-height:12px;color:#ffffff;white-space:pre;transform:scaleX(0.8569);transform-origin:0 0;">LF</div>
<div style="position:absolute;left:2401px;top:1369.34px;font:400 12px 'Liberation Sans', sans-serif;line-height:12px;color:#ffffff;white-space:pre;transform:scaleX(0.8679);transform-origin:0 0;">Java</div>
<div style="position:absolute;left:2438px;top:1369.34px;font:400 12px 'Liberation Sans', sans-serif;line-height:12px;color:#ffffff;white-space:pre;transform:scaleX(0.9825);transform-origin:0 0;">WPILib</div>
<div style="position:absolute;left:2383px;top:1369.34px;font:400 12px 'Liberation Sans', sans-serif;line-height:12px;color:#ffffff;white-space:pre;transform:scaleX(0.9692);transform-origin:0 0;">{ }</div>
<svg style="left:2488px;top:1363px" width="60" height="22" viewBox="2488 1363 60 22"><g fill="none" stroke="#ffffff" stroke-width="1.1">
<circle cx="2497" cy="1371" r="3"/><path d="M2492 1378.5 C2492 1375.5 2494 1374.5 2497 1374.5 C2499 1374.5 2500.5 1375 2501 1376"/><path d="M2499 1366.5 H2506 V1371 H2503 L2501 1373"/>
<path d="M2524.5 1378 H2534.5 L2533 1376 V1372 C2533 1369.5 2531.5 1368 2529.5 1368 C2527.5 1368 2526 1369.5 2526 1372 V1376 Z M2528 1379.5 H2531"/>
</g><circle cx="2534.5" cy="1368" r="2.3" fill="#fff"/></svg>
<div style="position:absolute;left:0;top:1385px;width:2551px;height:40px;background:linear-gradient(90deg,#3e3a3c 0px,#4a4043 600px,#4b353b 950px,#4a252d 1150px,#4d2c33 1450px,#47303a 1750px,#363035 2000px,#333136 2150px,#3c3a3e 2551px)"></div>
<div style="position:absolute;left:0px;top:1385px;width:39px;height:40px;background:#3a3738;"></div>
<svg style="left:6px;top:1397px" width="18" height="17" viewBox="0 0 18 17"><path d="M0.5 2.3 L7.2 1.4 V7.8 H0.5 Z M8.3 1.2 L17 0 V7.8 H8.3 Z M0.5 9 H7.2 V15.4 L0.5 14.5 Z M8.3 9 H17 V16.8 L8.3 15.6 Z" fill="#ffffff"/></svg>
<div style="position:absolute;left:39px;top:1385px;width:288px;height:40px;background:#303030;box-sizing:border-box;border-left:1px solid #4a4a4a;border-right:1px solid #4a4a4a;"></div>
<svg style="left:50px;top:1396px" width="18" height="18" viewBox="0 0 18 18"><circle cx="11" cy="6.5" r="5.2" fill="none" stroke="#e0e0e0" stroke-width="1.2"/><path d="M7.3 10.2 L1.2 16.3" stroke="#e0e0e0" stroke-width="1.3"/></svg>
<div style="position:absolute;left:80px;top:1398.48px;font:400 14.2px 'Liberation Sans', sans-serif;line-height:14.2px;color:#e8e8e8;white-space:pre;">Type here to search</div>
<svg style="left:245px;top:1386px" width="82" height="39" viewBox="0 0 82 39">
<defs><linearGradient id="stg" x1="0" y1="0" x2="1" y2="1"><stop offset="0" stop-color="#e8394a"/><stop offset="0.45" stop-color="#d8d0e8"/><stop offset="1" stop-color="#3a8ee6"/></linearGradient>
<linearGradient id="fld" x1="0" y1="0" x2="1" y2="0"><stop offset="0" stop-color="#6aa84f"/><stop offset="1" stop-color="#8cc47a"/></linearGradient></defs>
<path d="M0 39 L50 17 L82 30 V39 Z" fill="url(#fld)"/><path d="M12 37 L42 24 M32 39 L60 27 M56 39 L76 31" stroke="#d8ecc8" stroke-width="1"/>
<polygon points="21.3,3.9 22.5,13.3 31.5,16.1 22.9,20.1 23.0,29.5 16.6,22.6 7.6,25.6 12.2,17.4 6.6,9.8 15.9,11.6" fill="url(#stg)"/>
<ellipse cx="50" cy="21" rx="9.5" ry="15" transform="rotate(38 50 21)" fill="#9a5426"/><path d="M42 29 L58 13" stroke="#f4ece4" stroke-width="1.1"/><path d="M44 23 L48 27 M46.5 20.5 L50.5 24.5 M49 18 L53 22 M51.5 15.5 L55.5 19.5" stroke="#f4ece4" stroke-width="0.9"/>
<path d="M68 5 V16 C68 18 69 19 71 19 H74 C76 19 77 18 77 16 V5 M72.5 19 V34" fill="none" stroke="#e8c030" stroke-width="1.6"/>
</svg>
<svg style="left:342px;top:1397px" width="18" height="16" viewBox="0 0 18 16"><g fill="none" stroke="#ffffff" stroke-width="1.1"><rect x="1.5" y="3" width="10" height="10"/><path d="M0.5 0.8 H12.5 M0.5 15.2 H12.5 M15 0.5 V3 M15 5.5 V10.5 M15 13 V15.5"/></g></svg>
<svg style="left:389px;top:1392px" width="26" height="26" viewBox="0 0 26 26">
<defs><linearGradient id="eg1" x1="0" y1="0" x2="1" y2="1"><stop offset="0" stop-color="#36c3f0"/><stop offset="1" stop-color="#59d36a"/></linearGradient></defs>
<circle cx="13" cy="13" r="12" fill="url(#eg1)"/><path d="M2 15 C3 8 9 6 13 8 C17 10 17 14 13 15 C9 16 6 20 10 23 C5 23 2 19 2 15 Z" fill="#1565c0"/><path d="M13 15 C17 14 24 16 24 17 C22 22 18 25 13 25 C9 25 6 21 9 18 C10 16 12 15 13 15Z" fill="#0f56a8"/>
</svg>
<svg style="left:439px;top:1395px" width="25" height="21" viewBox="0 0 25 21"><path d="M1 2 H9 L11 4 H23 V19 H1 Z" fill="#f0c454"/><path d="M1 6 H23 V19 H1 Z" fill="#ffd96a"/><path d="M6 12 H18 V20 H15 V15 H9 V20 H6 Z" fill="#3b8ee0"/></svg>
<svg style="left:487px;top:1393px" width="26" height="26" viewBox="0 0 26 26"><path d="M8 5 V2.5 H18 V5" fill="none" stroke="#29a8e6" stroke-width="1.8"/><rect x="1.5" y="5" width="23" height="19" rx="2.5" fill="#f2f2f2"/><rect x="8" y="10" width="4.5" height="4.5" fill="#f25022"/><rect x="13.5" y="10" width="4.5" height="4.5" fill="#7fba00"/><rect x="8" y="15.5" width="4.5" height="4.5" fill="#00a4ef"/><rect x="13.5" y="15.5" width="4.5" height="4.5" fill="#ffb900"/></svg>
<svg style="left:536px;top:1393px" width="26" height="24" viewBox="0 0 26 24"><path d="M1 8 L13 1 L25 8 V23 H1 Z" fill="#0a5fb4"/><path d="M1 8 H25 V23 H1 Z" fill="#28a8ea"/><path d="M1 8 L13 16 L25 8" fill="#e8f4fc"/><path d="M1 23 L13 13 L25 23 Z" fill="#50c8f5"/></svg>
<svg style="left:586px;top:1393px" width="34" height="32" viewBox="0 0 34 32"><rect x="0" y="0" width="24" height="24" fill="#107c10"/><circle cx="12" cy="12" r="9.5" fill="#ffffff"/><path d="M5 4.5 C9 7 12 10 12 12 C12 10 15 7 19 4.5 M4 19 C7 15 10 13 12 12 C14 13 17 15 20 19" fill="none" stroke="#107c10" stroke-width="2.2"/><circle cx="24" cy="19" r="7.5" fill="#2c3a2e" stroke="#bbbbbb" stroke-width="1"/><text x="24.5" y="23" font-family="Liberation Sans" font-size="10" fill="#fff" text-anchor="middle">1</text></svg>
<svg style="left:634px;top:1392px" width="26" height="26" viewBox="0 0 26 26">
<path d="M13 1 A12 12 0 0 1 23.4 7 H13 Z" fill="#ea4335"/><path d="M13 1 A12 12 0 0 0 2.6 7 L7.8 16 L13 7 H23.4 A12 12 0 0 0 13 1Z" fill="#ea4335"/>
<path d="M2.6 7 A12 12 0 0 0 13 25 L18.2 16 L7.8 16 Z" fill="#34a853"/>
<path d="M23.4 7 A12 12 0 0 1 13 25 L18.2 16 A6 6 0 0 0 13 7 Z" fill="#fbbc05"/>
<circle cx="13" cy="13" r="5.6" fill="#ffffff"/><circle cx="13" cy="13" r="4.4" fill="#4285f4"/>
</svg>
<div style="position:absolute;left:672px;top:1385px;width:48px;height:40px;background:#6a6264;"></div>
<svg style="left:684px;top:1393px" width="25" height="25" viewBox="0 0 25 25"><path d="M18 0.5 L24 3.3 V21.7 L18 24.5 L7 14.6 L2.5 18 L0.5 17 V8 L2.5 7 L7 10.4 Z" fill="#2a9df4"/><path d="M18 6.5 L10.5 12.5 L18 18.5 Z" fill="#6a6264"/><path d="M18 0.5 L24 3.3 V21.7 L18 24.5 Z" fill="#1f8ad2"/></svg>
<div style="position:absolute;left:578px;top:1422px;width:40px;height:3px;background:#a8a8a8;"></div>
<div style="position:absolute;left:627px;top:1422px;width:40px;height:3px;background:#a8a8a8;"></div>
<div style="position:absolute;left:672px;top:1422px;width:48px;height:3px;background:#a8a8a8;"></div>
<svg style="left:2222px;top:1394px" width="22" height="22"><defs><linearGradient id="sun" x1="0" y1="0" x2="1" y2="1"><stop offset="0" stop-color="#f6c327"/><stop offset="1" stop-color="#ef6c10"/></linearGradient></defs><circle cx="11" cy="11" r="10" fill="url(#sun)"/></svg>
<div style="position:absolute;left:2253.5px;top:1399.98px;font:400 14.2px 'Liberation Sans', sans-serif;line-height:14.2px;color:#f0f0f0;white-space:pre;transform:scaleX(0.9387);transform-origin:0 0;">76°F  Sunny</div>
<svg style="left:2340px;top:1395px" width="100" height="22" viewBox="2340 1395 100 22"><g fill="none" stroke="#ffffff" stroke-width="1.1">
<path d="M2344 1408 L2350 1402 L2356 1408"/>
<path d="M2394 1409.5 A11 11 0 0 1 2406 1399 M2397 1409.5 A8 8 0 0 1 2406 1402 M2400 1409.5 A5 5 0 0 1 2406 1405"/>
<path d="M2414.5 1403.5 H2417.5 L2421.5 1399.5 V1414.5 L2417.5 1410.5 H2414.5 Z"/><path d="M2424 1404 A4 4 0 0 1 2424 1410 M2426.5 1401.5 A7.5 7.5 0 0 1 2426.5 1412.5 M2429 1399 A11 11 0 0 1 2429 1415"/>
</g><circle cx="2405" cy="1409.5" r="1.3" fill="#fff"/>
<path d="M2367 1407 C2366 1407 2366 1403 2369 1403 C2370 1400 2375 1400 2376 1403 C2379 1403 2379 1407 2377 1407 Z" fill="#c8c8c8"/><circle cx="2377.5" cy="1408.5" r="4.6" fill="#e81123"/><path d="M2375.5 1406.5 L2379.5 1410.5 M2379.5 1406.5 L2375.5 1410.5" stroke="#fff" stroke-width="1.1"/>
</svg>
<div style="position:absolute;left:2445px;top:1390.05px;font:400 12.7px 'Liberation Sans', sans-serif;line-height:12.7px;color:#ffffff;white-space:pre;transform:scaleX(0.8880);transform-origin:0 0;">5:29 PM</div>
<div style="position:absolute;left:2440px;top:1407.75px;font:400 12.7px 'Liberation Sans', sans-serif;line-height:12.7px;color:#ffffff;white-space:pre;transform:scaleX(0.9027);transform-origin:0 0;">2/12/2023</div>
<svg style="left:2509px;top:1396px" width="20" height="20" viewBox="0 0 20 20"><path d="M1.5 1.5 H17.5 V14.5 H11.5 L9.5 16.5 L7.5 14.5 H1.5 Z" fill="none" stroke="#ffffff" stroke-width="1.1"/></svg>
<div style="position:absolute;left:2546px;top:1385px;width:1px;height:40px;background:#6a686c;"></div>
<svg style="left:2300px;top:0" width="251" height="15" viewBox="2300 0 251 15"><g fill="none" stroke="#cccccc" stroke-width="1.1">
<rect x="2327.5" y="-7.5" width="13" height="14" rx="1"/><rect x="2349.5" y="-7.5" width="13" height="14" rx="1"/><rect x="2371.5" y="-7.5" width="13" height="14" rx="1"/><path d="M2379.5 -7 V6"/>
<rect x="2394" y="-7.5" width="5" height="13" rx="1"/><rect x="2402.5" y="0.5" width="4.5" height="4.5" rx="0.8"/>
<rect x="2478.5" y="-5.5" width="8" height="8.5"/><path d="M2480.5 -7.5 H2488.5 V1"/>
<path d="M2523 4 L2528 -1 L2533 4"/>
</g>
<rect x="2328" y="-7" width="5" height="13" fill="#cccccc"/>
<rect x="2350" y="1.5" width="12" height="4.5" fill="#cccccc"/>
</svg>
</body></html>
